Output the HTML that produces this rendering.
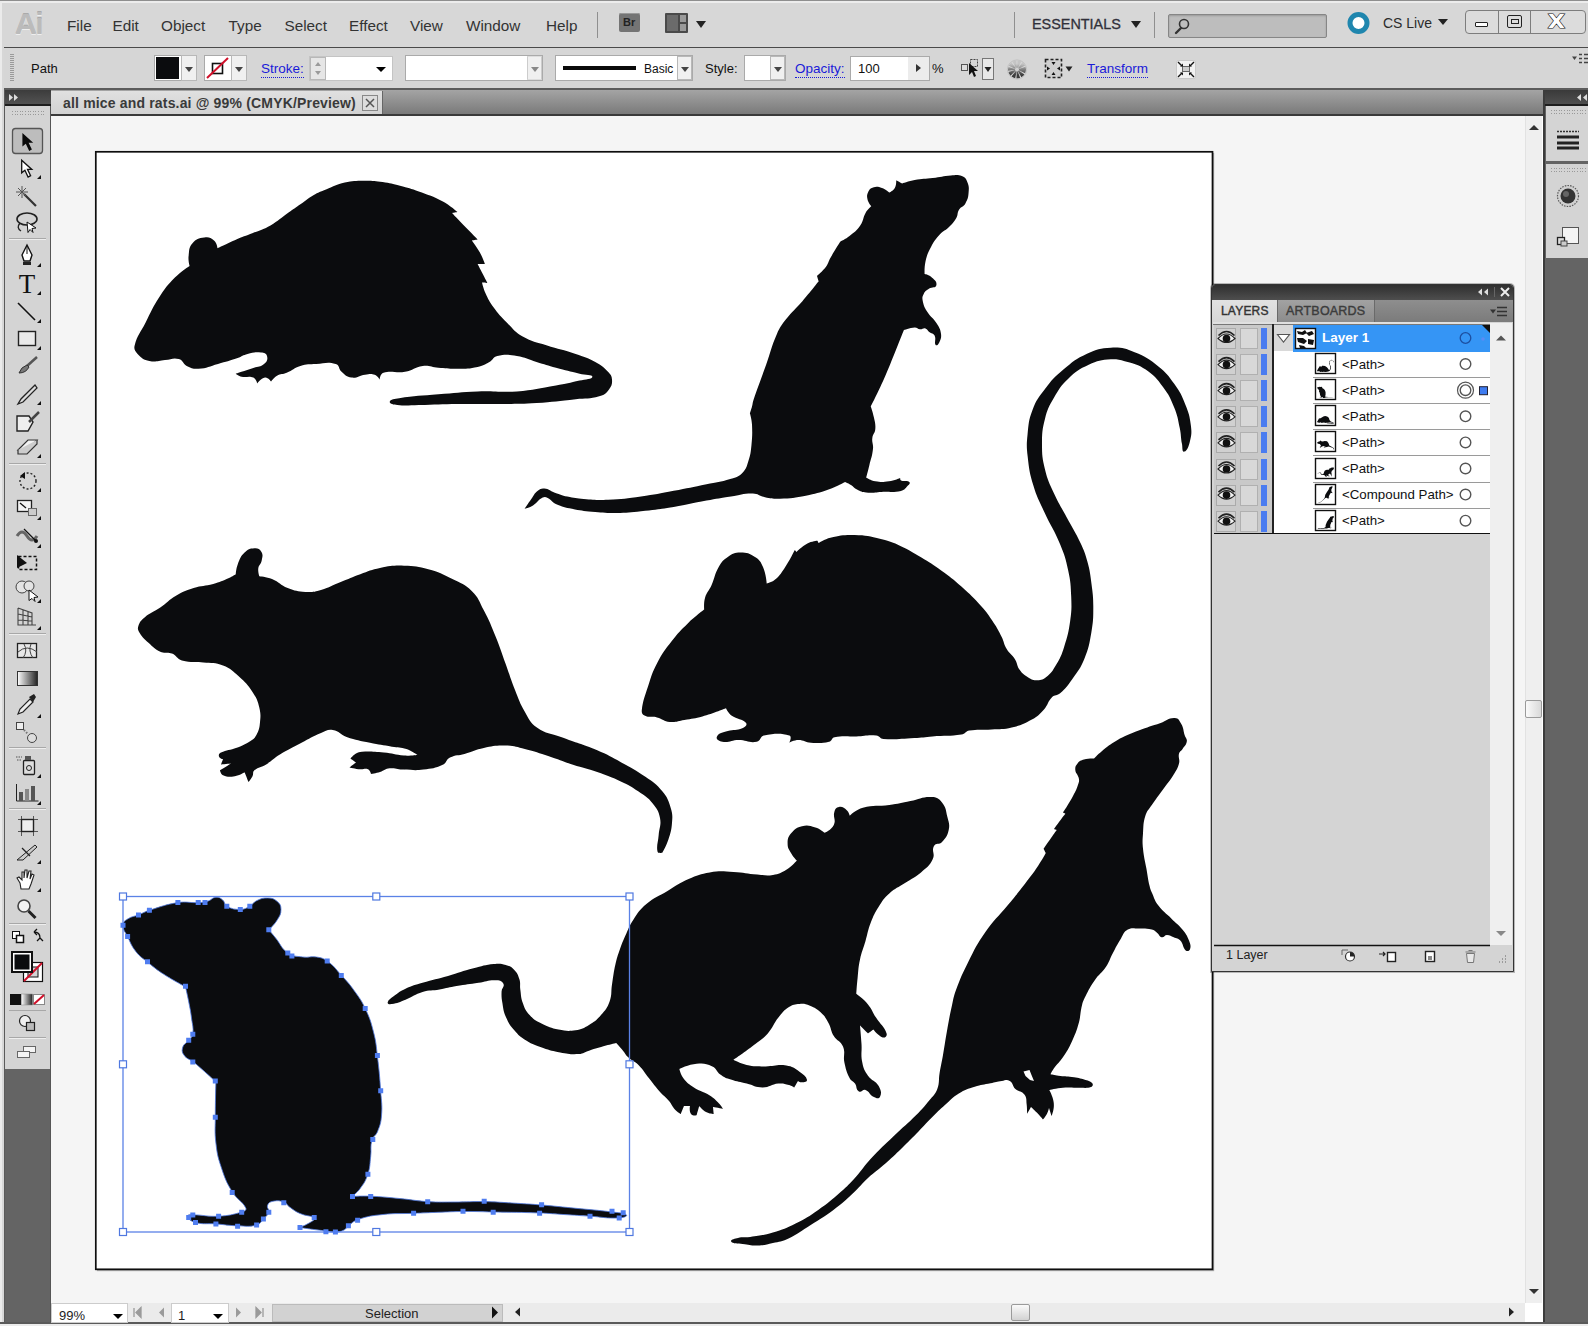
<!DOCTYPE html>
<html lang="en"><head><meta charset="utf-8"><title>all mice and rats.ai @ 99% (CMYK/Preview)</title>
<style>
html,body{margin:0;padding:0}
body{width:1588px;height:1326px;overflow:hidden;position:relative;background:#d7d7d7;font-family:"Liberation Sans",sans-serif;color:#1c1c1c}
.a{position:absolute}
.t{position:absolute;white-space:nowrap;line-height:1}
.menu .t{font-size:15.3px;top:18px;color:#333}
.ctl .t{font-size:13px;top:62px;color:#111}
.lnk{color:#1a1ad8 !important;border-bottom:1px dotted #1a1ad8;padding-bottom:1px;font-size:13.5px !important}
.wbox{background:#fff;border:1px solid #aaa;box-sizing:border-box}
.dd{background:#f0f0f0;border:1px solid #b8b8b8;box-sizing:border-box}
.arr{width:0;height:0;border-left:4px solid transparent;border-right:4px solid transparent;border-top:5px solid #444}
svg{position:absolute;left:0;top:0;overflow:visible}
</style></head><body>
<!-- window frame -->
<div class="a" style="left:0;top:0;width:1588px;height:1px;background:#8e8e8e"></div>
<div class="a" style="left:1px;top:1px;width:1587px;height:2px;background:#ececec"></div>
<div class="a" style="left:0;top:1px;width:2px;height:1325px;background:#ebebeb"></div>
<!-- MENU BAR -->
<div class="menu">
<div class="t" style="left:15px;top:9px;font-size:30px;font-weight:bold;color:#bbb;letter-spacing:-1.5px;text-shadow:0 1px 0 #eee,0 -1px 0 #aaa">Ai</div>
<div class="t" style="left:67px">File</div>
<div class="t" style="left:112.5px">Edit</div>
<div class="t" style="left:161px">Object</div>
<div class="t" style="left:228.5px">Type</div>
<div class="t" style="left:284.5px">Select</div>
<div class="t" style="left:349px">Effect</div>
<div class="t" style="left:410px">View</div>
<div class="t" style="left:466px">Window</div>
<div class="t" style="left:546px">Help</div>
<div class="a" style="left:597px;top:12px;width:1px;height:26px;background:#8f8f8f"></div>
<div class="a" style="left:619px;top:13px;width:21px;height:19px;background:#747474;border-radius:2px;box-shadow:inset 0 1px 0 #999"></div>
<div class="t" style="left:623px;top:17px;font-size:11px;font-weight:bold;color:#222">Br</div>
<div class="a" style="left:665px;top:13px;width:23px;height:20px;background:#4a4a4a;border-radius:1px"></div>
<div class="a" style="left:667px;top:15px;width:11px;height:16px;background:#6b6b6b"></div>
<div class="a" style="left:680px;top:15px;width:6px;height:7px;background:#9a9a9a"></div>
<div class="a" style="left:680px;top:24px;width:6px;height:7px;background:#9a9a9a"></div>
<div class="a arr" style="left:696px;top:21px;border-left-width:5px;border-right-width:5px;border-top-width:7px;border-top-color:#222"></div>
<div class="a" style="left:1014px;top:12px;width:1px;height:26px;background:#8f8f8f"></div>
<div class="t" style="left:1032px;top:17px;font-size:14.4px;color:#30303a;-webkit-text-stroke:0.3px #30303a">ESSENTIALS</div>
<div class="a arr" style="left:1131px;top:21px;border-left-width:5px;border-right-width:5px;border-top-width:7px;border-top-color:#222"></div>
<div class="a" style="left:1154px;top:12px;width:1px;height:26px;background:#8f8f8f"></div>
<div class="a" style="left:1168px;top:14px;width:159px;height:24px;background:#bdbdbd;border:1px solid #868686;box-sizing:border-box;border-radius:2px;box-shadow:inset 0 1px 2px #9a9a9a"></div>
<svg width="1588" height="50" style="pointer-events:none"><circle cx="1184" cy="24" r="4.5" fill="none" stroke="#333" stroke-width="1.6"/><path d="M1181 28L1176 33" stroke="#333" stroke-width="2.4" stroke-linecap="round"/>
<circle cx="1358.5" cy="23" r="8.5" fill="#fff" stroke="#1f86ae" stroke-width="5"/></svg>
<div class="t" style="left:1383px;top:16px;font-size:14px;color:#2b2b2b">CS Live</div>
<div class="a arr" style="left:1438px;top:19px;border-left-width:5px;border-right-width:5px;border-top-width:6px;border-top-color:#222"></div>
<div class="a" style="left:1465px;top:10px;width:121px;height:24px;border:1px solid #7d7d7d;box-sizing:border-box;border-radius:4px;background:#dcdcdc"></div>
<div class="a" style="left:1498px;top:11px;width:1px;height:22px;background:#7d7d7d"></div>
<div class="a" style="left:1530px;top:11px;width:1px;height:22px;background:#7d7d7d"></div>
<div class="a" style="left:1475px;top:22px;width:13px;height:5px;border:1.5px solid #222;box-sizing:border-box;background:#fff;border-radius:1px"></div>
<div class="a" style="left:1507px;top:15px;width:15px;height:13px;border:1.5px solid #222;box-sizing:border-box;border-radius:2px"></div>
<div class="a" style="left:1511px;top:19px;width:8px;height:5px;border:1.5px solid #222;box-sizing:border-box"></div>
<div class="t" style="left:1549px;top:12px;font-size:19px;font-weight:bold;color:#fff;-webkit-text-stroke:1.2px #222;paint-order:stroke fill;font-family:'DejaVu Sans','Liberation Sans',sans-serif;transform:scaleX(1.15)">X</div>
</div>
<!-- CONTROL BAR -->
<div class="a" style="left:4px;top:47px;width:1584px;height:1px;background:#4a4a4a"></div><div class="a" style="left:4px;top:47px;width:1px;height:43px;background:#4a4a4a"></div>
<div class="a" style="left:4px;top:48px;width:1584px;height:40px;background:#d6d6d6"></div>
<div class="a" style="left:4px;top:88px;width:1584px;height:2px;background:#5c5c5c"></div>
<div class="ctl">
<div class="a" style="left:10px;top:54px;width:4px;height:28px;background:repeating-linear-gradient(#9a9a9a 0 1px,transparent 1px 2px)"></div>
<div class="t" style="left:31px">Path</div>
<div class="a wbox" style="left:154px;top:55px;width:28px;height:26px"></div>
<div class="a" style="left:156px;top:57px;width:23px;height:22px;background:#0b0c0e"></div>
<div class="a dd" style="left:181px;top:55px;width:16px;height:26px"></div><div class="a arr" style="left:185px;top:67px"></div>
<div class="a wbox" style="left:204px;top:55px;width:28px;height:26px"></div>
<svg width="400" height="90"><rect x="212.5" y="63.5" width="10" height="10" fill="#fff" stroke="#111" stroke-width="1.6"/><path d="M207 78L228 58" stroke="#d0102a" stroke-width="2"/></svg>
<div class="a dd" style="left:231px;top:55px;width:16px;height:26px"></div><div class="a arr" style="left:235px;top:67px"></div>
<div class="t lnk" style="left:261px">Stroke:</div>
<div class="a wbox" style="left:309px;top:56px;width:84px;height:25px;border-color:#c4c4c4"></div>
<div class="a dd" style="left:310px;top:57px;width:16px;height:23px;background:#e6e6e6"></div>
<div class="a arr" style="left:315px;top:62px;border-top:0;border-bottom:4px solid #9a9a9a;border-left-width:3px;border-right-width:3px"></div>
<div class="a arr" style="left:315px;top:71px;border-top:4px solid #9a9a9a;border-left-width:3px;border-right-width:3px"></div>
<div class="a arr" style="left:376px;top:67px;border-top-color:#000;border-left-width:5px;border-right-width:5px"></div>
<div class="a wbox" style="left:405px;top:55px;width:138px;height:26px"></div>
<div class="a dd" style="left:527px;top:56px;width:15px;height:24px;border-color:#ddd #ccc"></div><div class="a arr" style="left:531px;top:67px;border-top-color:#888"></div>
<div class="a wbox" style="left:555px;top:55px;width:138px;height:26px"></div>
<div class="a" style="left:563px;top:66px;width:73px;height:4px;background:#0a0a0a"></div>
<div class="t" style="left:644px;font-size:12px;top:63px">Basic</div>
<div class="a dd" style="left:677px;top:56px;width:15px;height:24px"></div><div class="a arr" style="left:681px;top:67px"></div>
<div class="t" style="left:705px">Style:</div>
<div class="a wbox" style="left:744px;top:55px;width:42px;height:26px"></div>
<div class="a dd" style="left:770px;top:56px;width:15px;height:24px"></div><div class="a arr" style="left:774px;top:67px"></div>
<div class="t lnk" style="left:795px">Opacity:</div>
<div class="a wbox" style="left:850px;top:56px;width:80px;height:25px"></div>
<div class="t" style="left:858px">100</div>
<div class="a" style="left:908px;top:57px;width:21px;height:23px;background:#ececec"></div>
<div class="a" style="left:916px;top:64px;width:0;height:0;border-top:4.5px solid transparent;border-bottom:4.5px solid transparent;border-left:5px solid #333"></div>
<div class="t" style="left:932px">%</div>
<svg width="1588" height="90">
<rect x="961.5" y="64.5" width="6" height="6" fill="#ddd" stroke="#555"/><rect x="970.5" y="59.5" width="7" height="7" fill="none" stroke="#444" stroke-dasharray="2 1"/><path d="M969 63l9 8-4 0 2 5-2 1-2-5-3 3z" fill="#111"/>
<rect x="982.5" y="58.5" width="11" height="21" fill="#e8e8e8" stroke="#777"/><path d="M984.5 67h7l-3.5 5z" fill="#222"/>
<linearGradient id="rw" x1="0" y1="0" x2="0" y2="1"><stop offset="0" stop-color="#c4c4c4"/><stop offset="1" stop-color="#3c3c3c"/></linearGradient><circle cx="1017" cy="69.5" r="5.5" fill="#d0d0d0" stroke="url(#rw)" stroke-width="7" stroke-dasharray="2.4 .800"/><circle cx="1017" cy="69.5" r="9.6" fill="none" stroke="#c2c2c2" stroke-width="1"/>
<rect x="1045.5" y="59.5" width="16" height="18" fill="#cfcfcf" stroke="#222" stroke-width="1.6" stroke-dasharray="3 2"/><path d="M1051.5 62h4l-2 3zM1051.5 75h4l-2-3zM1047 66.500v4l3-2zM1060 66.500v4l-3-2z" fill="#111"/>
<path d="M1065.5 66.500h7l-3.5 5z" fill="#222"/>
<rect x="1176.5" y="60.5" width="19" height="18" rx="2" fill="#f2f2f2" stroke="#c8c8c8"/><rect x="1182.5" y="66.5" width="7" height="5" fill="#ccc" stroke="#666"/>
<path d="M1178 62l4 4M1194 62l-4 4M1178 77l4-4M1194 77l-4-4" stroke="#111" stroke-width="1.4"/><path d="M1180 66.500h3v-3zM1192 66.500h-3v-3zM1180 72.500h3v3zM1192 72.500h-3v3z" fill="#111"/>
<path d="M1572 56.500l5 0-2.5 3.500z" fill="#444"/><path d="M1579 54.500h3M1584 54.500h6M1579 58.500h3M1584 58.500h6M1579 62.500h3M1584 62.500h6" stroke="#444" stroke-width="1.6"/>
</svg>
<div class="t lnk" style="left:1087px">Transform</div>
</div>
<!-- TAB BAR -->
<div class="a" style="left:51px;top:90px;width:1494px;height:24px;background:linear-gradient(#a4a4a4,#7a7a7a)"></div>
<div class="a" style="left:51px;top:114px;width:1494px;height:2px;background:#3a3a3a"></div>
<div class="a" style="left:51px;top:91px;width:332px;height:23px;background:linear-gradient(#e0e0e0,#d2d2d2);border-right:1px solid #666;box-sizing:border-box"></div>
<div class="t" style="left:63px;top:96px;font-size:14px;color:#3a3a3a;font-weight:bold;letter-spacing:0.17px">all mice and rats.ai @ 99% (CMYK/Preview)</div>
<div class="a" style="left:362px;top:95px;width:16px;height:16px;border:1px solid #888;box-sizing:border-box;background:#ddd"></div>
<svg width="400" height="120"><path d="M366 99l8 8M374 99l-8 8" stroke="#555" stroke-width="1.5"/></svg>
<!-- LEFT TOOLBAR -->
<div class="a" style="left:4px;top:90px;width:1px;height:1232px;background:#5a5a5a"></div>
<div class="a" style="left:5px;top:90px;width:46px;height:16px;background:linear-gradient(#3c3c3c,#555)"></div>
<div class="a" style="left:5px;top:106px;width:46px;height:963px;background:#d4d4d4"></div>
<div class="a" style="left:5px;top:1069px;width:46px;height:253px;background:#646464"></div>
<div class="a" style="left:50px;top:106px;width:1px;height:1216px;background:#555"></div>
<div class="a" style="left:12px;top:111px;width:33px;height:1px;background:repeating-linear-gradient(90deg,#999 0 1px,transparent 1px 2.6px)"></div><div class="a" style="left:12px;top:114px;width:33px;height:1px;background:repeating-linear-gradient(90deg,#999 0 1px,transparent 1px 2.6px)"></div><div class="a" style="left:5px;top:104px;width:46px;height:2px;background:#1e1e1e"></div>
<svg width="60" height="1100" viewBox="0 0 60 1100">
<rect x="12.5" y="128.5" width="30" height="25" rx="3" fill="#bdbdbd" stroke="#555" stroke-width="1.3"/>
<path d="M22.4 133v13.500l3.4-2.8 3.4 7.3 2.7-1.4-3.3-6.800h4.600z" fill="#0a0a0a"/>
<path d="M21.7 160.300v12.500l3.2-2.6 3.2 6.8 2.5-1.3-3.1-6.300h4.300z" fill="#fff" stroke="#111" stroke-width="1.3"/><path d="M41 179v-4l-4 4z" fill="#111"/>
<path d="M24 194l12 12" stroke="#333" stroke-width="2.2"/><path d="M22 186v12M16 192h12M18 188l8 8M26 188l-8 8" stroke="#555" stroke-width="1"/>
<ellipse cx="27" cy="219" rx="10" ry="6" fill="none" stroke="#222" stroke-width="1.6"/><path d="M20 223q-4 5 1 8" fill="none" stroke="#222" stroke-width="1.4"/><path d="M27 222l9 6-4 .5 1 4-3-3-2 3z" fill="#fff" stroke="#111"/>
<path d="M9 238.500h37" stroke="#a8a8a8"/><path d="M9 239.500h37" stroke="#eee"/>
<path d="M27 245l5 10-2 6h-6l-2-6z" fill="#fff" stroke="#111" stroke-width="1.4"/><path d="M27 246v8" stroke="#111"/><rect x="23" y="262" width="8" height="3" fill="#222"/><path d="M41 267v-4l-4 4z" fill="#111"/>
<text x="27" y="293" font-family="Liberation Serif,serif" font-size="27" text-anchor="middle" fill="#111">T</text><path d="M41 295v-4l-4 4z" fill="#111"/>
<path d="M18 303l17 17" stroke="#111" stroke-width="1.6"/><path d="M41 323v-4l-4 4z" fill="#111"/>
<rect x="18.5" y="331.5" width="17" height="14" fill="#eaeaea" stroke="#222" stroke-width="1.4"/><path d="M41 350v-4l-4 4z" fill="#111"/>
<path d="M37 357l-10 9" stroke="#555" stroke-width="2.5"/><path d="M27 365q-6 2-8 8 7 0 10-6z" fill="#777" stroke="#333"/>
<path d="M35 385l-14 14-3 5 5-2 14-14z" fill="#ddd" stroke="#222" stroke-width="1.3"/><path d="M41 405v-4l-4 4z" fill="#111"/>
<path d="M17 416h12l4 6-5 9h-11z" fill="#eee" stroke="#222" stroke-width="1.4"/><path d="M39 412l-10 10" stroke="#444" stroke-width="2.5"/>
<path d="M18 450l10-10h9l-10 10z" fill="#f2f2f2" stroke="#333" stroke-width="1.2"/><path d="M18 450v4h9l10-10v-4" fill="#ccc" stroke="#333" stroke-width="1.2"/><path d="M41 458v-4l-4 4z" fill="#111"/>
<path d="M9 463.500h37" stroke="#a8a8a8"/><path d="M9 464.500h37" stroke="#eee"/>
<circle cx="28" cy="481" r="8" fill="none" stroke="#222" stroke-width="1.4" stroke-dasharray="2 2"/><path d="M20 476l5-4v7z" fill="#111"/><path d="M41 492v-4l-4 4z" fill="#111"/>
<rect x="17.5" y="500.5" width="14" height="11" fill="#f4f4f4" stroke="#222" stroke-width="1.3"/><rect x="28.5" y="508.5" width="8" height="7" fill="#ccc" stroke="#666"/><path d="M20 503l6 5" stroke="#111" stroke-width="1.3"/><path d="M41 520v-4l-4 4z" fill="#111"/>
<path d="M17 536q5-8 10 0t10 0" fill="none" stroke="#666" stroke-width="3"/><path d="M24 529l12 12" stroke="#111" stroke-width="1.2"/><circle cx="36" cy="541" r="2" fill="#111"/><path d="M41 548v-4l-4 4z" fill="#111"/>
<rect x="18.5" y="556.5" width="18" height="13" fill="none" stroke="#111" stroke-width="1.5" stroke-dasharray="3 2"/><path d="M17 555l10 8-10 5z" fill="#111"/>
<circle cx="22" cy="587" r="6" fill="#e4e4e4" stroke="#444"/><circle cx="29" cy="586" r="5" fill="#e4e4e4" stroke="#444"/><path d="M29 590l9 7-4 .5 1 4-3-3-3 2z" fill="#fff" stroke="#111"/><path d="M41 603v-4l-4 4z" fill="#111"/>
<path d="M18 608v17h18M18 608l14 5v12M23 610v15M28 612v13M18 614l14 3M18 620l14 1" fill="none" stroke="#444" stroke-width="1.1"/><path d="M41 630v-4l-4 4z" fill="#111"/>
<path d="M9 633.500h37" stroke="#a8a8a8"/><path d="M9 634.500h37" stroke="#eee"/>
<rect x="17.5" y="643.5" width="19" height="14" fill="#e8e8e8" stroke="#222" stroke-width="1.3"/><path d="M18 652q9-8 19 0M24 644q4 7-1 14M31 644q-3 7 2 14" fill="none" stroke="#444"/>
<linearGradient id="gg" x1="0" x2="1"><stop offset="0" stop-color="#fff"/><stop offset="1" stop-color="#222"/></linearGradient><rect x="17.5" y="671.5" width="20" height="14" fill="url(#gg)" stroke="#333"/>
<path d="M18 714l2-5 10-10 3 3-10 10z" fill="#eee" stroke="#222" stroke-width="1.2"/><path d="M29 697l5-3 2 3-3 5z" fill="#222"/><path d="M41 718v-4l-4 4z" fill="#111"/>
<rect x="16.5" y="722.5" width="7" height="7" fill="#eee" stroke="#444"/><circle cx="32" cy="738" r="4.5" fill="#ddd" stroke="#444"/><path d="M24 730l4 4" stroke="#777" stroke-dasharray="1.5 1.5" stroke-width="2"/>
<path d="M9 747.500h37" stroke="#a8a8a8"/><path d="M9 748.500h37" stroke="#eee"/>
<rect x="23.5" y="760.5" width="11" height="14" rx="1" fill="#ddd" stroke="#222" stroke-width="1.3"/><circle cx="29" cy="768" r="2.5" fill="none" stroke="#222"/><rect x="25" y="756" width="6" height="4" fill="#555"/><path d="M16 757h6M17 760h4" stroke="#555" stroke-dasharray="1.5 1"/><path d="M41 778v-4l-4 4z" fill="#111"/>
<path d="M16.5 784v17h22" fill="none" stroke="#222"/><rect x="19" y="792" width="4" height="9" fill="#555"/><rect x="25" y="789" width="4" height="12" fill="#888"/><rect x="31" y="786" width="4" height="15" fill="#555"/><path d="M41 805v-4l-4 4z" fill="#111"/>
<path d="M9 808.500h37" stroke="#a8a8a8"/><path d="M9 809.500h37" stroke="#eee"/>
<rect x="21.5" y="819.5" width="12" height="12" fill="#eee" stroke="#222" stroke-width="1.4"/><path d="M18 819.500h3M34 819.500h4M18 831.500h3M34 831.500h4M21.5 816v3M21.5 832v4M33.5 816v3M33.5 832v4" stroke="#555"/>
<path d="M17 860l18-15 2 2-14 13z" fill="#ccc" stroke="#222"/><path d="M22 848l8 8" stroke="#222" stroke-width="1.3"/><path d="M41 864v-4l-4 4z" fill="#111"/>
<path d="M20 883l-3-5 2-1 3 3v-8h2v6l1-8h2l0 8 2-7h2l-1 8 2-5 2 1-3 9-2 5h-8z" fill="#fff" stroke="#222" stroke-width="1.1"/><path d="M41 892v-4l-4 4z" fill="#111"/>
<circle cx="24" cy="906" r="6" fill="#f2f2f2" stroke="#444" stroke-width="1.6"/><path d="M28.5 911l7 7" stroke="#222" stroke-width="3"/>
<path d="M9 923.500h37" stroke="#a8a8a8"/><path d="M9 924.500h37" stroke="#eee"/>
<rect x="12.5" y="931.5" width="7" height="7" fill="#fff" stroke="#111"/><rect x="16.5" y="935.5" width="7" height="7" fill="#fff" stroke="#111" stroke-width="1.5"/><path d="M34 932q6 0 6 6M34 932l3-3M34 932l3 3M40 938l-3 3M40 938l3 3" stroke="#111" stroke-width="1.3" fill="none"/>
<rect x="23.5" y="962.5" width="19" height="19" fill="#fff" stroke="#111" stroke-width="1.2"/><rect x="28" y="967" width="10" height="10" fill="#d4d4d4" stroke="#111"/><path d="M24 981l18-18" stroke="#d0102a" stroke-width="2"/>
<rect x="12" y="952" width="20" height="20" fill="#fff" stroke="#111" stroke-width="2"/><rect x="14.5" y="954.5" width="15" height="15" fill="#0b0c0e"/>
<rect x="10" y="994" width="11" height="11" fill="#111"/><rect x="21.5" y="994" width="11" height="11" fill="url(#gg)" stroke="#888" stroke-width=".5"/><rect x="33.5" y="994.5" width="11" height="10" fill="#fff" stroke="#888"/><path d="M34 1004l10-9" stroke="#d0102a" stroke-width="2"/>
<path d="M9 1010.500h37" stroke="#a8a8a8"/>
<circle cx="25" cy="1021" r="5.5" fill="#f0f0f0" stroke="#222" stroke-width="1.2"/><rect x="26.5" y="1022.5" width="8" height="8" fill="#bbb" stroke="#222" stroke-width="1.2"/>
<path d="M9 1037.500h37" stroke="#a8a8a8"/><path d="M9 1038.500h37" stroke="#eee"/>
<rect x="23.5" y="1046.5" width="12" height="6" fill="#f4f4f4" stroke="#666"/><rect x="17.5" y="1051.5" width="12" height="6" fill="#f4f4f4" stroke="#666"/>
</svg>
<!-- CANVAS -->
<div class="a" style="left:51px;top:116px;width:1474px;height:1187px;background:#f5f5f5"></div>
<div class="a" style="left:96px;top:152px;width:1117px;height:1118px;background:#fff;box-shadow:1px 1px 1px rgba(0,0,0,.3)"></div>
<svg width="1588" height="1326" viewBox="0 0 1588 1326">
<rect x="95.8" y="151.8" width="1116.7" height="1117.5" fill="none" stroke="#0e0e0e" stroke-width="1.7"/>
<path d="M134.7 345.3C137.3 334.9 140.4 332.7 145.5 322.7C151.4 311.1 152.1 308.2 159.2 297.3C165.4 287.8 167.0 285.7 174.9 277.6C180.8 271.5 189.6 265.9 189.6 265.9C189.6 265.9 188.0 260.4 188.6 256.0C189.4 250.1 188.6 247.9 192.5 243.3C196.3 238.8 198.4 238.3 204.3 237.5C208.8 236.9 210.5 237.5 214.0 240.4C217.0 242.8 217.5 248.2 217.5 248.2C217.5 248.2 227.2 243.4 235.3 239.9C243.1 236.5 245.0 236.2 252.9 233.0C260.9 229.7 263.0 229.7 270.5 225.4C279.0 220.5 280.2 218.4 288.2 212.8C293.8 208.8 295.1 208.0 300.8 204.0C306.5 200.0 307.4 198.6 313.4 195.2C318.8 192.1 320.2 191.8 326.0 189.5C334.4 186.1 336.0 184.6 344.8 182.6C353.1 180.7 355.2 180.8 363.7 180.7C372.2 180.6 374.2 180.8 382.6 182.0C390.5 183.1 392.3 183.7 400.0 185.7C408.6 187.9 410.5 188.4 418.8 191.4C429.6 195.3 432.2 195.8 442.4 201.2C449.8 205.1 457.5 212.0 457.5 212.0C457.5 212.0 452.0 213.0 452.0 213.0C452.0 213.0 459.6 221.1 465.9 227.6C471.1 233.0 477.6 239.4 477.6 239.4C477.6 239.4 471.8 240.4 471.8 240.4C471.8 240.4 476.5 246.5 479.6 252.0C482.5 257.1 484.9 263.9 484.9 263.9C484.9 263.9 477.6 263.9 477.6 263.9C477.6 263.9 487.5 283.0 487.5 283.0C487.5 283.0 482.0 282.5 482.0 282.5C482.0 282.5 483.4 288.7 485.5 293.3C488.5 299.7 489.1 301.3 493.3 307.0C498.8 314.6 500.4 316.1 507.0 322.7C513.6 329.4 514.5 331.8 522.7 336.5C532.5 342.2 535.5 341.7 546.3 345.3C559.4 349.6 562.6 349.5 575.7 354.0C584.7 357.1 587.0 357.4 595.3 362.0C601.6 365.5 603.0 366.6 608.0 371.8C610.7 374.7 611.8 375.7 612.0 379.6C612.3 384.2 611.8 385.7 609.0 389.4C605.7 393.7 604.4 394.8 599.2 396.3C589.0 399.3 586.3 398.1 575.7 399.2C558.1 401.1 554.2 401.9 536.5 403.0C518.9 404.1 514.9 403.8 497.3 404.0C479.6 404.2 475.7 403.8 458.0 404.0C440.4 404.2 436.4 404.7 418.8 405.0C409.1 405.2 406.9 406.1 397.3 405.0C393.6 404.6 389.2 403.9 389.8 401.6C390.4 399.3 394.8 398.9 399.2 398.2C415.4 395.8 420.7 395.8 438.4 394.3C456.0 392.8 459.9 392.1 477.6 391.4C495.3 390.7 499.3 392.7 516.9 391.4C534.6 390.1 538.5 388.5 556.0 385.5C566.7 383.7 569.1 383.1 579.6 380.6C585.5 379.2 592.4 379.0 592.4 376.7C592.4 374.4 585.3 375.1 579.6 373.7C569.0 371.1 566.6 370.7 556.0 367.8C547.2 365.4 545.3 364.6 536.5 362.0C527.7 359.3 526.0 357.4 516.9 356.0C508.2 354.7 505.9 354.1 497.3 356.0C492.9 357.0 493.3 359.8 489.4 362.0C484.4 364.8 483.2 365.7 477.6 366.9C468.9 368.8 466.9 368.6 458.0 368.8C449.2 369.0 447.2 368.5 438.4 367.8C431.3 367.2 429.8 365.1 422.7 365.9C414.4 366.9 413.3 370.4 405.0 371.8C395.5 373.5 392.0 370.1 383.5 372.7C380.1 373.7 379.6 379.6 379.6 379.6C379.6 379.6 377.7 375.7 374.7 374.7C370.6 373.3 369.3 374.2 365.0 374.7C358.8 375.5 357.6 378.4 351.4 377.6C346.3 377.0 345.5 375.2 341.6 371.8C338.3 368.9 339.9 365.3 335.7 364.0C327.2 361.4 324.9 363.5 316.0 364.0C308.9 364.4 307.2 363.9 300.4 365.9C293.8 367.9 293.0 370.0 286.7 372.7C282.5 374.5 281.0 373.4 277.0 375.7C273.7 377.6 271.0 381.6 271.0 381.6C271.0 381.6 268.2 377.2 265.0 377.6C260.7 378.2 257.3 383.5 257.3 383.5C257.3 383.5 256.2 378.9 253.3 377.6C248.5 375.5 246.8 377.8 241.6 376.7C238.7 376.1 235.7 373.7 235.7 373.7C235.7 373.7 245.4 370.7 253.3 368.0C258.2 366.3 260.1 367.4 264.0 364.0C266.9 361.5 268.0 359.7 267.0 356.0C266.2 353.0 264.1 352.8 261.0 352.5C254.9 351.9 253.5 352.6 247.5 354.0C242.8 355.1 242.2 356.5 237.6 358.0C228.9 360.9 226.9 361.5 218.0 363.9C209.2 366.3 207.5 368.2 198.4 368.8C193.0 369.1 191.6 368.3 186.7 365.9C182.5 363.8 183.4 360.2 178.8 359.0C172.8 357.4 171.2 359.6 165.0 360.0C158.0 360.5 156.3 362.5 149.4 361.0C143.4 359.7 141.8 358.5 137.6 354.0C134.8 351.0 133.7 349.3 134.7 345.3Z" fill="#0b0c0e"/>
<path d="M753.5 400.0C758.2 386.0 760.5 380.5 766.2 364.6C771.1 350.8 771.1 347.3 777.0 333.8C780.1 326.8 781.3 325.4 786.0 319.3C792.8 310.6 795.2 309.5 802.4 301.2C810.0 292.4 818.7 281.3 818.7 281.3C818.7 281.3 817.0 275.9 817.0 275.9C817.0 275.9 822.6 271.4 826.0 266.8C828.7 263.2 828.3 261.7 830.5 257.8C834.7 250.3 840.4 241.5 840.4 241.5C840.4 241.5 845.8 239.0 849.5 236.0C854.9 231.6 856.5 230.9 860.4 225.2C863.9 220.1 862.7 217.9 865.8 212.5C867.6 209.3 871.2 206.2 871.2 206.2C871.2 206.2 868.4 203.0 867.6 199.8C866.9 196.6 866.7 195.6 868.0 192.6C869.3 189.7 869.9 188.5 873.0 187.5C876.9 186.2 878.1 186.8 882.0 188.0C885.7 189.2 889.3 192.6 889.3 192.6C889.3 192.6 893.2 190.8 894.8 188.0C896.5 184.9 896.2 180.3 896.2 180.3C896.2 180.3 902.0 183.5 902.0 183.5C902.0 183.5 908.9 181.0 914.7 180.0C922.8 178.6 924.7 179.0 932.8 178.0C941.0 177.0 942.7 176.0 950.9 175.4C955.8 175.1 957.2 174.2 961.8 176.0C965.1 177.3 965.9 178.4 967.2 181.7C969.1 186.3 969.0 187.7 968.6 192.6C968.2 197.7 967.9 199.0 965.4 203.5C963.4 207.0 961.1 206.4 959.0 209.8C956.9 213.1 958.3 214.6 956.3 218.0C953.7 222.5 952.7 223.3 949.0 227.0C945.3 230.7 943.5 230.4 940.0 234.2C935.3 239.4 934.3 240.7 931.0 246.9C927.7 253.1 927.1 254.6 925.5 261.4C924.2 266.9 924.6 274.0 924.6 274.0C924.6 274.0 928.7 274.7 931.0 276.8C934.2 279.8 937.0 281.1 936.4 285.0C935.9 288.6 932.2 286.5 929.2 288.6C926.4 290.6 925.3 290.9 923.7 294.0C922.2 296.9 922.1 298.0 922.8 301.2C923.9 306.4 924.6 307.5 927.4 312.0C930.8 317.4 933.0 317.6 936.4 323.0C939.2 327.5 940.3 328.6 941.0 333.8C941.5 338.0 940.8 339.3 939.0 342.9C938.2 344.5 936.4 346.2 935.5 344.7C934.0 342.3 936.4 339.3 934.6 335.6C933.3 333.0 931.5 333.8 929.2 332.0C927.4 330.6 927.7 329.1 925.5 328.4C923.1 327.7 922.5 329.5 920.0 329.3C917.5 329.1 917.2 327.4 914.7 327.5C909.7 327.8 903.8 330.2 903.8 330.2C903.8 330.2 899.9 340.2 896.6 348.3C890.8 362.6 889.8 365.9 883.5 380.0C878.1 392.1 870.8 406.5 870.8 406.5C870.8 406.5 872.8 412.2 873.8 417.0C874.9 422.3 875.7 423.6 875.3 429.0C875.0 433.3 872.8 433.9 872.3 438.2C871.7 442.9 873.5 444.0 873.0 448.8C872.2 456.4 871.1 458.0 869.3 465.4C868.0 470.9 866.2 477.5 866.2 477.5C866.2 477.5 870.9 480.6 875.3 481.3C881.4 482.3 882.9 482.1 889.0 481.3C894.2 480.6 900.2 478.0 900.2 478.0C900.2 478.0 899.9 480.0 901.0 480.5C904.0 481.8 907.3 480.0 909.3 482.0C910.9 483.6 908.6 484.9 907.0 486.6C904.7 489.1 904.3 490.3 901.0 491.0C892.5 492.8 890.2 491.5 881.4 491.9C874.6 492.2 873.0 493.2 866.2 492.6C861.9 492.2 860.9 491.5 857.0 489.6C854.0 488.1 853.9 486.8 851.0 485.0C848.4 483.4 845.0 482.0 845.0 482.0C845.0 482.0 836.2 486.9 828.5 489.6C818.5 493.1 816.2 493.7 805.8 495.7C794.3 497.9 791.7 498.3 780.0 498.7C773.2 498.9 771.7 498.5 765.0 497.2C759.4 496.1 758.6 493.5 752.9 493.4C742.9 493.2 740.8 495.0 731.0 496.5C720.0 498.2 717.5 498.6 706.5 500.6C691.7 503.3 688.5 504.6 673.7 507.0C659.1 509.4 655.8 509.7 641.0 511.2C630.0 512.3 627.5 512.8 616.4 512.9C605.4 513.0 602.9 512.7 591.9 511.7C582.9 510.9 580.8 510.7 572.0 508.8C564.6 507.2 562.8 507.0 555.8 503.9C551.7 502.1 551.8 500.0 547.7 498.0C545.7 497.0 544.7 496.6 542.7 497.6C537.8 500.1 537.8 502.5 533.0 505.5C529.6 507.6 524.7 508.8 524.7 508.8C524.7 508.8 528.2 503.3 531.3 499.0C534.1 495.2 534.1 493.7 537.8 490.8C540.3 488.9 541.3 488.3 544.4 488.6C549.1 489.1 549.7 490.9 554.2 492.4C560.0 494.4 561.3 495.2 567.3 496.5C574.6 498.1 576.3 498.4 583.7 499.0C594.6 499.9 597.1 500.3 608.0 499.8C622.9 499.1 626.2 498.5 641.0 496.5C655.8 494.5 659.0 493.6 673.7 490.8C688.5 488.0 691.8 487.3 706.5 484.2C717.2 482.0 719.8 482.3 730.2 479.0C736.0 477.2 738.0 477.3 742.3 473.0C746.6 468.7 746.5 466.7 748.4 461.0C750.6 454.4 750.7 452.7 751.4 445.8C752.3 436.3 752.4 434.1 752.0 424.6C751.8 419.4 749.9 413.3 749.9 413.3C749.9 413.3 751.2 409.6 752.0 406.5C752.8 403.6 752.5 402.8 753.5 400.0Z" fill="#0b0c0e"/>
<path d="M138.3 626.2C139.8 621.6 140.9 620.6 144.6 617.4C151.0 612.0 153.4 612.2 160.3 607.5C167.6 602.5 168.4 600.3 176.0 595.8C183.5 591.4 185.3 590.6 193.6 588.0C202.2 585.3 204.5 586.4 213.2 584.0C220.5 581.9 222.0 581.0 229.0 578.0C232.2 576.6 235.8 574.2 235.8 574.2C235.8 574.2 236.0 568.6 237.7 564.4C240.0 558.7 240.2 556.9 244.6 552.6C248.1 549.3 249.6 548.6 254.4 548.3C257.9 548.1 259.5 548.7 261.3 551.7C263.3 555.1 262.4 556.6 261.7 560.5C261.0 564.3 258.9 564.5 258.3 568.3C257.8 571.8 259.3 576.2 259.3 576.2C259.3 576.2 266.6 576.8 272.0 579.0C279.5 582.1 280.1 585.1 287.7 588.0C295.3 590.9 297.3 591.4 305.4 591.9C312.5 592.3 314.2 591.8 321.0 589.9C330.2 587.3 331.8 585.5 340.7 582.0C349.5 578.5 351.4 577.4 360.3 574.2C369.1 571.1 370.9 569.8 380.0 568.0C390.6 565.9 393.2 565.4 404.0 565.7C415.1 566.0 417.6 566.4 428.3 569.3C439.6 572.4 441.9 573.8 452.4 579.0C461.5 583.6 464.5 583.8 471.7 591.0C479.0 598.2 479.0 601.2 483.8 610.3C489.9 621.9 490.8 624.7 495.8 636.9C500.6 648.7 501.2 651.5 505.5 663.4C509.8 675.4 510.3 678.2 515.0 690.0C519.0 699.9 519.4 702.5 524.8 711.7C529.3 719.4 529.6 722.3 536.9 727.4C546.5 734.1 550.1 732.9 561.0 737.0C577.2 743.2 581.2 743.6 597.2 750.3C608.4 755.0 610.7 756.6 621.3 762.4C632.4 768.5 635.1 769.5 645.4 776.8C653.6 782.6 656.0 783.5 662.3 791.3C667.7 797.9 668.3 800.1 670.8 808.2C672.7 814.5 672.5 816.2 672.0 822.7C671.4 830.5 670.8 832.2 668.4 839.6C666.4 845.8 662.3 852.8 662.3 852.8C662.3 852.8 657.9 853.8 657.5 851.6C656.3 845.6 658.1 842.3 658.7 834.7C659.3 827.1 661.4 825.3 660.0 817.9C658.6 810.7 657.3 809.1 652.7 803.4C647.3 796.8 645.2 796.1 638.2 791.3C631.0 786.3 629.2 785.4 621.3 781.7C610.7 776.7 608.2 775.9 597.2 772.0C586.5 768.2 583.8 768.3 573.0 764.8C562.1 761.2 559.8 759.9 548.9 756.3C538.1 752.8 535.8 751.7 524.8 749.0C516.2 746.9 514.3 745.7 505.5 745.5C495.7 745.2 493.4 745.9 483.8 747.9C474.9 749.7 473.2 751.4 464.5 753.9C458.0 755.7 456.0 754.5 450.0 757.5C445.8 759.6 446.9 762.9 442.7 764.8C434.6 768.5 432.3 768.5 423.4 769.6C414.7 770.7 412.7 769.9 404.0 769.6C397.5 769.4 396.1 767.7 389.7 768.3C385.1 768.8 384.5 770.6 380.0 772.0C376.0 773.2 371.0 774.0 371.0 774.0C371.0 774.0 370.3 770.3 368.0 769.3C364.8 767.9 363.7 769.7 360.3 769.3C355.4 768.8 349.5 767.4 349.5 767.4C349.5 767.4 356.0 762.5 356.0 762.5C356.0 762.5 350.5 758.5 350.5 758.5C350.5 758.5 353.1 755.2 356.0 753.5C358.4 752.1 359.2 751.8 362.0 751.7C371.3 751.4 374.0 751.7 383.8 752.6C393.0 753.4 394.8 754.9 404.0 755.6C410.0 756.0 417.4 755.0 417.4 755.0C417.4 755.0 411.8 750.7 406.5 749.0C400.2 746.9 398.5 747.8 392.0 746.7C382.1 745.0 379.8 744.9 370.0 742.8C359.4 740.5 356.9 740.5 346.6 737.0C340.0 734.7 339.7 731.1 332.8 730.0C327.4 729.2 326.1 730.9 321.0 733.0C311.9 736.7 310.2 738.2 301.5 742.8C291.7 748.0 289.3 748.8 279.9 754.6C273.4 758.6 272.7 760.4 266.2 764.4C261.1 767.5 258.9 766.4 254.4 770.3C252.3 772.1 253.8 773.7 252.5 776.2C251.1 779.0 248.5 782.0 248.5 782.0C248.5 782.0 244.6 772.3 244.6 772.3C244.6 772.3 239.5 775.6 234.8 776.2C229.5 776.9 227.9 777.2 223.0 775.2C220.6 774.2 220.0 770.3 220.0 770.3C220.0 770.3 231.0 763.4 231.0 763.4C231.0 763.4 221.0 764.4 221.0 764.4C221.0 764.4 223.0 759.5 223.0 759.5C223.0 759.5 219.6 758.7 219.0 756.6C218.4 754.7 219.2 753.5 221.0 752.6C226.9 749.6 229.9 750.4 236.8 747.7C243.2 745.2 244.7 744.6 250.5 740.9C253.7 738.9 254.6 738.3 256.4 735.0C259.0 730.1 259.3 728.7 259.9 723.2C260.6 716.2 260.9 714.4 259.3 707.5C257.5 700.0 256.7 698.3 252.5 691.9C247.3 684.0 245.7 682.5 238.7 676.2C232.3 670.5 231.0 668.5 223.0 665.4C214.7 662.2 212.3 663.6 203.4 662.5C193.8 661.3 191.2 663.1 181.9 660.5C176.7 659.0 177.0 655.6 172.0 653.6C167.1 651.6 165.1 653.9 160.3 651.7C154.3 648.9 153.4 647.3 148.5 642.8C144.1 638.8 142.8 638.0 139.7 633.0C138.1 630.3 137.4 629.2 138.3 626.2Z" fill="#0b0c0e"/>
<path d="M641.8 710.0C643.0 700.4 644.6 697.0 648.0 686.6C651.5 675.8 651.9 673.1 657.2 663.0C662.6 652.6 664.4 650.6 671.6 641.3C678.3 632.6 680.1 630.9 688.0 623.2C694.8 616.6 704.2 609.6 704.2 609.6C704.2 609.6 703.5 603.0 705.0 597.9C706.8 591.7 708.9 591.1 711.5 585.2C715.1 577.1 714.3 574.6 718.7 567.0C721.7 561.7 722.7 560.4 727.8 557.0C732.8 553.7 734.4 552.6 740.4 552.6C747.3 552.6 749.2 553.3 755.0 557.0C759.9 560.1 760.7 561.7 763.0 567.0C766.1 573.9 766.7 583.4 766.7 583.4C766.7 583.4 771.7 582.3 774.8 579.7C779.7 575.6 780.4 574.2 784.0 568.9C789.5 560.7 794.8 549.9 794.8 549.9C794.8 549.9 796.5 552.0 796.5 552.0C796.5 552.0 801.9 546.4 807.4 543.5C811.5 541.3 817.4 540.8 817.4 540.8C817.4 540.8 818.5 543.0 818.5 543.0C818.5 543.0 824.7 539.0 830.4 537.7C841.1 535.4 843.7 534.8 854.6 535.1C866.5 535.4 869.2 536.3 880.8 539.1C890.1 541.3 892.2 542.2 900.9 546.2C910.3 550.5 912.1 552.0 921.0 557.3C930.3 562.9 932.4 564.1 941.2 570.4C950.6 577.2 952.8 578.7 961.4 586.5C970.9 595.0 973.0 597.0 981.5 606.6C987.5 613.4 988.6 615.2 993.6 622.8C997.7 628.9 998.4 630.4 1001.7 636.9C1004.3 642.2 1003.7 643.9 1006.7 649.0C1009.7 654.0 1011.7 654.1 1014.8 659.0C1017.7 663.7 1016.6 665.7 1019.8 670.1C1022.6 674.0 1023.8 674.6 1027.9 677.2C1031.2 679.2 1032.1 680.2 1035.9 680.2C1040.6 680.2 1042.2 680.0 1046.0 677.2C1051.6 673.0 1052.4 671.2 1056.0 665.1C1060.6 657.4 1061.4 655.5 1064.1 647.0C1067.8 635.5 1068.5 632.8 1070.2 620.8C1071.7 610.0 1071.6 607.5 1071.2 596.6C1070.7 584.7 1070.7 582.0 1068.2 570.4C1065.6 558.3 1064.8 555.6 1060.1 544.2C1054.0 529.3 1051.0 526.7 1044.3 512.0C1038.9 500.1 1037.0 497.7 1033.3 485.2C1029.5 472.7 1029.2 469.7 1027.7 456.7C1026.6 447.0 1026.5 444.7 1027.5 435.0C1028.7 423.6 1028.4 420.7 1032.5 410.0C1036.4 399.7 1038.3 397.7 1045.0 389.0C1052.3 379.4 1054.2 377.3 1063.4 369.6C1073.2 361.4 1075.4 359.2 1087.0 353.8C1097.1 349.2 1099.8 348.1 1110.9 347.7C1121.7 347.3 1124.5 348.2 1134.6 352.2C1146.2 356.8 1148.7 358.6 1158.4 366.4C1166.7 373.0 1168.1 375.2 1174.2 383.8C1180.3 392.4 1181.4 394.6 1185.3 404.4C1188.9 413.3 1189.6 415.5 1190.8 425.0C1191.7 432.1 1191.7 433.9 1190.0 440.9C1188.8 446.2 1187.2 450.6 1184.5 451.6C1181.8 452.6 1182.7 447.5 1182.0 444.0C1180.6 437.0 1181.3 435.2 1179.8 428.2C1177.8 418.8 1177.8 416.5 1174.2 407.6C1170.2 397.8 1169.3 395.4 1163.0 387.0C1156.4 378.2 1154.8 375.9 1145.7 369.6C1138.1 364.3 1135.6 364.3 1126.7 361.7C1119.8 359.7 1118.1 358.7 1110.9 359.3C1100.6 360.1 1098.1 360.5 1088.7 364.8C1078.4 369.5 1076.2 371.2 1068.0 379.0C1060.3 386.4 1059.2 388.8 1053.8 398.0C1048.7 406.8 1047.5 408.9 1045.0 418.7C1042.2 429.8 1042.0 432.5 1042.0 444.0C1042.0 455.5 1042.3 458.2 1045.0 469.4C1047.7 480.4 1049.1 482.7 1053.8 493.0C1058.8 504.1 1060.8 506.2 1066.5 516.9C1072.8 528.7 1074.9 530.9 1080.5 543.0C1084.3 551.3 1085.1 553.2 1087.5 562.0C1090.1 571.7 1090.2 574.0 1091.5 584.0C1092.8 594.1 1093.3 596.4 1093.3 606.6C1093.3 618.4 1093.3 621.1 1091.3 632.8C1089.2 644.8 1088.9 647.7 1084.3 659.0C1080.3 668.8 1078.3 670.5 1072.2 679.2C1067.4 686.0 1066.3 687.7 1060.1 693.3C1057.1 696.0 1054.9 694.4 1052.0 697.3C1047.4 701.9 1048.4 704.6 1044.0 709.4C1039.2 714.7 1038.1 716.0 1031.9 719.5C1023.4 724.3 1021.2 725.2 1011.7 727.6C1002.9 729.8 1000.7 729.0 991.6 729.6C981.6 730.3 979.3 729.0 969.4 730.6C965.4 731.3 965.4 734.0 961.4 734.6C949.1 736.5 945.4 735.5 932.4 736.4C924.2 737.0 922.5 737.6 914.3 738.0C900.5 738.7 896.2 739.8 883.5 739.0C879.9 738.8 879.9 735.8 876.3 735.5C867.3 734.6 865.3 736.0 856.3 736.4C846.5 736.8 843.7 735.5 834.6 737.3C831.4 737.9 832.2 741.1 829.0 741.8C821.1 743.6 819.1 743.2 811.0 742.7C805.2 742.4 804.2 740.0 798.4 740.0C794.1 740.0 789.3 742.7 789.3 742.7C789.3 742.7 792.4 736.4 789.3 735.5C780.9 733.1 774.9 733.4 764.0 735.5C759.7 736.3 761.0 741.0 756.7 741.8C748.6 743.2 746.8 740.0 738.6 740.0C731.2 740.0 729.5 743.0 722.3 741.8C718.9 741.2 715.5 739.4 717.0 736.4C718.8 732.8 722.6 732.7 727.8 731.0C734.1 729.0 736.3 730.9 742.3 728.2C745.0 727.0 747.8 725.0 745.9 722.8C742.3 718.6 737.3 719.8 731.4 715.5C728.1 713.1 726.0 708.3 726.0 708.3C726.0 708.3 713.2 713.5 702.4 716.5C694.4 718.7 692.5 718.6 684.3 720.0C677.8 721.1 676.4 722.5 669.8 721.9C663.7 721.3 662.9 718.9 657.0 717.4C651.5 716.0 649.6 718.0 644.5 715.5C642.0 714.3 641.5 712.7 641.8 710.0Z" fill="#0b0c0e"/>
<path d="M123.0 925.2C123.0 921.7 124.7 920.9 127.6 919.0C132.0 916.1 133.6 916.8 138.5 914.9C143.4 912.9 144.3 911.9 149.4 910.3C162.1 906.3 164.8 904.7 177.9 902.6C186.9 901.2 189.1 903.0 198.2 902.6C202.5 902.4 203.6 902.6 207.7 901.3C211.6 900.1 211.8 897.6 215.9 897.2C219.2 896.9 220.1 897.9 222.7 900.0C225.3 902.1 223.8 904.6 226.8 906.2C232.3 909.1 234.1 909.4 240.3 909.4C244.8 909.4 245.8 908.3 249.8 906.2C253.3 904.3 253.0 902.4 256.6 900.7C261.2 898.6 262.4 897.9 267.5 898.0C272.0 898.1 273.5 898.4 277.0 901.3C280.1 903.9 281.0 905.3 281.0 909.4C281.0 914.6 279.7 915.8 277.0 920.3C274.1 925.1 268.8 929.8 268.8 929.8C268.8 929.8 272.6 934.3 275.6 938.0C281.1 944.7 280.7 947.9 287.8 952.9C293.5 956.9 295.9 956.0 302.8 957.0C308.9 957.9 310.4 956.0 316.4 957.0C321.5 957.8 323.0 958.0 327.2 961.0C334.2 966.1 335.0 968.2 340.8 974.6C347.2 981.7 348.8 983.1 354.4 990.9C359.8 998.4 361.3 1000.1 365.2 1008.5C369.9 1018.5 370.7 1020.9 373.4 1031.6C376.2 1042.4 376.1 1045.0 377.4 1056.0C379.3 1071.9 379.6 1075.4 380.7 1091.4C381.5 1102.4 382.4 1104.9 381.5 1115.8C380.9 1123.3 380.1 1125.0 377.4 1132.0C375.8 1136.0 373.1 1135.8 372.0 1140.0C370.0 1147.2 371.6 1149.1 370.7 1156.5C369.7 1164.4 370.4 1166.4 367.9 1174.0C365.5 1181.3 364.3 1182.8 359.8 1189.0C356.9 1193.0 351.7 1196.5 351.7 1196.5C351.7 1196.5 361.9 1195.8 370.3 1196.2C383.9 1196.8 386.9 1197.3 400.5 1198.6C412.8 1199.8 415.4 1200.8 427.7 1201.6C440.0 1202.4 442.7 1202.0 455.0 1202.0C468.1 1202.0 471.1 1201.4 484.2 1201.6C496.7 1201.8 499.5 1202.3 512.0 1203.0C525.3 1203.8 528.3 1203.9 541.6 1205.0C557.1 1206.3 560.5 1206.8 576.0 1208.3C592.2 1209.9 595.8 1209.9 612.0 1212.0C618.5 1212.8 624.1 1212.7 626.2 1214.7C628.3 1216.7 622.1 1217.8 618.2 1218.0C606.1 1218.5 602.7 1217.0 590.0 1216.2C578.7 1215.5 576.3 1215.3 565.0 1214.6C553.6 1213.9 551.0 1213.4 539.6 1213.0C518.7 1212.2 514.1 1212.4 493.2 1212.0C479.6 1211.7 476.6 1211.4 463.0 1211.5C451.7 1211.6 449.2 1211.9 438.0 1212.3C427.0 1212.7 424.6 1212.9 413.6 1213.3C399.8 1213.9 396.7 1213.0 383.0 1214.5C371.7 1215.7 369.0 1215.9 358.2 1219.4C353.2 1221.0 352.6 1222.6 348.4 1225.8C346.2 1227.4 346.5 1228.8 344.0 1230.0C340.4 1231.7 339.4 1231.8 335.4 1232.0C331.1 1232.2 330.2 1231.5 325.9 1231.0C314.2 1229.6 300.0 1227.6 300.0 1227.6C300.0 1227.6 308.9 1223.6 313.6 1220.3C314.6 1219.6 315.3 1218.2 314.2 1217.6C309.7 1215.3 306.1 1216.2 300.0 1213.5C294.7 1211.2 293.9 1210.0 289.2 1206.7C286.6 1204.8 286.9 1203.0 283.8 1202.0C279.1 1200.5 277.7 1200.3 272.9 1201.3C269.9 1201.9 268.6 1202.6 267.5 1205.4C266.4 1208.2 269.7 1209.1 268.8 1212.0C267.7 1215.8 266.1 1216.1 263.4 1219.0C260.6 1222.0 260.5 1224.0 256.6 1225.0C248.3 1227.2 246.2 1226.0 237.6 1225.8C227.8 1225.5 225.7 1224.7 215.9 1223.9C206.7 1223.2 204.4 1224.7 195.5 1222.5C191.2 1221.4 188.3 1219.3 187.4 1216.8C186.5 1214.4 190.2 1214.9 192.8 1214.9C203.2 1214.7 207.0 1216.9 218.6 1216.2C229.1 1215.6 232.6 1214.7 241.7 1212.0C244.2 1211.3 246.9 1210.3 245.8 1208.0C242.6 1201.3 237.1 1199.9 232.2 1191.8C226.0 1181.5 225.1 1178.8 221.3 1167.4C217.7 1156.7 217.2 1154.2 215.9 1143.0C214.5 1131.4 215.3 1128.7 215.3 1117.0C215.3 1101.2 215.9 1081.9 215.9 1081.9C215.9 1081.9 208.5 1075.1 202.3 1069.6C198.1 1065.9 197.2 1064.9 192.8 1061.5C189.3 1058.8 187.4 1059.5 184.7 1056.0C182.4 1053.0 181.6 1051.6 182.5 1047.9C183.6 1043.6 186.0 1043.8 188.7 1040.3C190.7 1037.7 192.4 1037.5 192.8 1034.3C193.7 1027.0 192.4 1025.3 191.5 1018.0C190.6 1010.6 190.1 1009.0 188.7 1001.7C187.4 995.0 185.5 986.8 185.5 986.8C185.5 986.8 173.5 980.6 164.3 974.6C156.6 969.6 155.1 968.2 148.0 962.4C142.3 957.8 140.4 957.3 135.8 951.5C131.1 945.5 130.9 943.5 127.6 936.6C125.2 931.6 123.0 930.7 123.0 925.2Z" fill="#0b0c0e" stroke="#4f78e0" stroke-width="0.8"/>
<path d="M620.0 949.0C622.1 943.0 622.7 941.6 625.3 935.8C628.6 928.5 628.8 926.6 633.2 919.9C638.3 912.2 639.3 910.0 646.4 904.0C654.9 896.8 657.9 896.6 667.5 890.9C676.9 885.3 678.6 883.4 688.6 879.0C697.8 875.0 699.9 874.0 709.8 872.4C720.3 870.7 722.8 871.4 733.5 871.9C744.3 872.4 746.6 873.7 757.3 874.5C764.3 875.1 766.0 876.1 773.0 875.0C779.3 874.0 780.8 873.1 786.3 869.8C791.7 866.5 796.9 860.5 796.9 860.5C796.9 860.5 793.4 857.2 791.6 853.9C789.2 849.5 787.6 848.5 787.6 843.4C787.6 838.3 788.3 836.7 791.6 832.8C795.2 828.5 796.6 827.4 802.0 826.2C807.9 824.9 809.6 825.8 815.4 827.5C820.0 828.8 824.6 832.8 824.6 832.8C824.6 832.8 831.5 829.8 833.8 824.9C836.3 819.5 832.7 817.4 834.4 811.7C835.2 808.8 836.0 807.2 839.0 806.9C842.9 806.5 844.0 807.9 847.0 810.4C849.0 812.1 849.7 815.6 849.7 815.6C849.7 815.6 856.2 809.5 862.9 807.7C874.4 804.6 877.5 806.7 889.3 805.0C898.9 803.7 900.9 802.8 910.4 801.0C919.9 799.2 921.8 796.6 931.5 797.0C936.8 797.2 938.7 798.2 942.0 802.4C946.4 807.9 945.7 810.2 947.4 817.0C948.8 822.7 949.9 824.3 948.7 830.0C947.4 836.0 946.2 837.4 942.0 842.0C939.3 845.0 935.9 842.5 934.0 846.0C931.2 851.2 935.4 853.7 932.8 859.0C929.3 866.2 927.1 867.1 921.0 872.4C914.5 878.0 912.2 878.2 905.0 883.0C897.9 887.7 895.6 887.8 889.3 893.5C883.6 898.6 882.8 900.3 878.7 906.7C874.4 913.4 873.7 915.1 870.8 922.6C867.7 930.6 867.9 932.7 865.5 941.0C863.1 949.3 861.8 951.0 860.0 959.5C858.2 967.7 858.5 969.7 857.6 978.0C856.8 985.1 856.3 993.8 856.3 993.8C856.3 993.8 863.5 998.9 868.0 1004.4C872.4 1009.8 872.3 1011.8 876.0 1017.6C880.6 1024.8 884.4 1026.8 886.6 1033.4C887.4 1035.8 885.1 1038.1 882.7 1037.4C878.3 1036.1 873.4 1029.5 873.4 1029.5C873.4 1029.5 868.0 1033.4 868.0 1033.4C868.0 1033.4 860.0 1025.5 860.0 1025.5C860.0 1025.5 861.0 1035.7 861.5 1044.0C862.0 1052.3 860.6 1054.3 862.3 1062.5C863.6 1068.8 864.3 1070.4 868.0 1075.7C871.8 1081.2 875.4 1080.2 878.7 1086.0C881.1 1090.3 881.8 1093.2 880.0 1096.8C878.7 1099.5 876.1 1098.1 873.4 1096.8C869.2 1094.8 869.9 1091.6 865.5 1090.0C862.6 1089.0 861.5 1093.1 858.9 1091.5C855.5 1089.4 857.3 1086.9 855.0 1083.6C853.1 1080.8 851.2 1081.3 849.7 1078.3C846.3 1071.6 846.0 1069.8 844.4 1062.5C842.9 1055.5 845.7 1053.3 843.0 1046.6C840.7 1040.7 837.1 1041.4 833.8 1036.0C830.5 1030.6 831.6 1028.5 828.5 1022.9C825.6 1017.7 825.0 1016.4 820.6 1012.3C816.5 1008.5 815.2 1007.8 810.0 1005.7C805.5 1003.9 804.3 1003.6 799.5 1003.9C794.6 1004.2 793.1 1004.3 789.0 1007.0C783.3 1010.7 782.6 1012.3 778.4 1017.6C773.0 1024.3 773.6 1027.1 767.8 1033.4C761.6 1040.3 759.3 1040.9 752.0 1046.6C743.9 1052.8 733.5 1059.8 733.5 1059.8C733.5 1059.8 740.4 1063.7 746.7 1065.0C754.9 1066.7 756.9 1066.3 765.2 1066.4C774.7 1066.5 776.9 1064.1 786.3 1065.6C792.8 1066.6 794.1 1068.0 799.5 1071.7C803.5 1074.4 806.1 1076.1 806.9 1079.6C807.5 1082.1 804.5 1081.9 802.0 1082.3C800.1 1082.6 798.0 1081.0 798.0 1081.0C798.0 1081.0 794.2 1087.5 794.2 1087.5C794.2 1087.5 791.5 1085.6 789.0 1085.0C784.3 1083.8 783.2 1083.1 778.4 1083.6C771.1 1084.3 769.9 1087.5 762.6 1087.5C755.2 1087.5 753.8 1085.4 746.7 1083.6C739.6 1081.8 737.8 1082.0 730.9 1079.6C725.9 1077.9 724.6 1077.5 720.3 1074.4C716.2 1071.5 717.0 1068.5 712.4 1066.4C705.8 1063.5 703.8 1063.2 696.6 1063.8C688.5 1064.4 679.4 1069.0 679.4 1069.0C679.4 1069.0 680.6 1074.7 683.4 1078.3C687.3 1083.2 688.6 1084.1 693.9 1087.5C700.6 1091.9 703.0 1091.2 709.8 1095.5C714.4 1098.4 715.1 1099.5 719.0 1103.4C721.1 1105.5 723.0 1108.7 723.0 1108.7C723.0 1108.7 713.0 1107.0 713.0 1107.0C713.0 1107.0 713.7 1114.0 713.7 1114.0C713.7 1114.0 709.1 1113.7 706.0 1112.0C702.4 1110.0 699.2 1106.0 699.2 1106.0C699.2 1106.0 696.6 1115.3 696.6 1115.3C696.6 1115.3 692.5 1116.1 691.0 1114.0C688.9 1111.0 690.0 1106.0 690.0 1106.0C690.0 1106.0 684.0 1106.0 684.0 1106.0C684.0 1106.0 680.7 1114.0 680.7 1114.0C680.7 1114.0 677.4 1112.2 675.4 1110.0C672.0 1106.2 672.1 1104.6 668.8 1100.7C665.0 1096.2 663.5 1095.9 659.6 1091.5C654.6 1085.8 653.7 1084.3 649.0 1078.3C644.3 1072.3 643.9 1070.4 638.5 1065.0C634.3 1060.8 632.3 1061.1 627.9 1057.0C625.3 1054.6 625.3 1053.5 623.0 1050.7C620.1 1047.2 616.3 1043.0 616.3 1043.0C616.3 1043.0 610.6 1044.3 606.0 1045.6C598.3 1047.8 596.6 1048.3 589.0 1050.7C584.5 1052.1 583.7 1053.7 579.0 1054.0C570.5 1054.5 568.6 1053.8 560.2 1052.4C552.4 1051.1 550.7 1050.6 543.2 1048.0C535.3 1045.2 533.3 1044.9 526.2 1040.5C520.2 1036.8 518.9 1035.7 514.3 1030.3C509.6 1024.8 508.7 1023.3 505.8 1016.7C503.3 1010.9 503.4 1009.3 502.4 1003.0C501.5 997.7 501.4 996.5 501.6 991.2C501.8 987.7 505.0 986.7 503.3 983.6C501.5 980.3 499.4 980.3 495.6 980.2C487.9 979.9 486.2 981.6 478.6 982.7C468.7 984.2 466.4 984.3 456.5 986.0C448.8 987.3 447.2 988.1 439.5 989.5C431.9 990.8 429.9 989.8 422.5 992.0C414.5 994.4 413.3 996.6 405.5 999.7C399.5 1002.0 397.8 1003.1 391.9 1004.0C389.9 1004.3 387.3 1004.3 387.7 1002.3C388.3 999.7 390.6 998.6 393.6 996.3C398.6 992.4 399.8 991.4 405.5 988.7C412.8 985.2 414.7 985.0 422.5 982.7C433.9 979.3 436.6 979.1 448.0 975.9C459.5 972.6 461.9 971.3 473.5 968.3C482.6 965.9 484.6 965.0 493.9 964.0C499.2 963.4 500.6 963.4 505.8 964.9C510.1 966.2 511.2 966.8 514.3 970.0C517.6 973.5 518.0 974.7 519.4 979.3C520.8 983.7 519.6 984.9 520.3 989.5C521.2 995.6 520.7 997.2 522.8 1003.0C524.9 1008.8 525.4 1010.4 529.6 1015.0C534.0 1019.9 535.6 1020.5 541.5 1023.5C548.8 1027.1 550.5 1027.9 558.5 1029.5C566.0 1031.0 567.9 1031.4 575.5 1030.3C582.0 1029.3 583.4 1028.4 589.0 1025.0C595.0 1021.4 596.4 1020.3 601.0 1015.0C605.8 1009.5 607.2 1008.2 609.6 1001.4C612.2 994.1 610.8 992.0 612.0 984.4C613.5 975.2 613.4 973.1 615.5 964.0C617.1 957.1 617.7 955.7 620.0 949.0Z" fill="#0b0c0e"/>
<path d="M956.0 990.0C960.7 977.3 961.9 974.5 968.0 962.4C975.2 948.2 976.5 944.8 985.6 931.8C994.4 919.2 997.8 917.5 1007.5 905.6C1015.5 895.8 1017.3 893.7 1025.0 883.7C1031.0 875.9 1032.5 874.2 1038.0 866.0C1041.8 860.4 1045.8 853.0 1045.8 853.0C1045.8 853.0 1043.6 848.7 1043.6 848.7C1043.6 848.7 1047.8 842.7 1051.2 837.8C1053.7 834.3 1056.7 830.0 1056.7 830.0C1056.7 830.0 1054.0 829.0 1054.0 829.0C1054.0 829.0 1058.3 822.9 1062.0 818.0C1063.5 816.0 1065.4 813.7 1065.4 813.7C1065.4 813.7 1063.0 812.5 1063.0 812.5C1063.0 812.5 1068.9 803.7 1073.0 796.0C1076.0 790.4 1076.7 789.1 1078.6 783.0C1079.3 780.7 1079.2 780.0 1078.6 777.6C1077.7 774.0 1075.6 773.7 1075.3 770.0C1075.1 766.9 1075.5 765.8 1077.5 763.4C1079.7 760.8 1080.7 760.5 1084.0 759.5C1088.3 758.2 1093.9 758.6 1093.9 758.6C1093.9 758.6 1097.8 754.3 1101.5 751.4C1108.1 746.2 1109.4 744.6 1116.8 740.5C1126.2 735.2 1128.7 734.6 1138.7 730.6C1148.4 726.7 1150.8 726.4 1160.6 723.0C1167.0 720.8 1168.0 717.7 1174.8 718.0C1178.8 718.2 1179.3 720.6 1181.3 724.0C1183.9 728.5 1183.1 730.1 1184.6 735.0C1185.5 738.0 1187.3 738.5 1186.8 741.6C1186.2 745.5 1184.6 745.9 1182.4 749.2C1181.0 751.3 1179.6 751.2 1179.0 753.6C1178.0 757.9 1180.1 759.1 1179.0 763.4C1177.6 768.7 1176.6 769.7 1173.7 774.4C1169.3 781.6 1167.7 782.8 1162.8 789.7C1157.9 796.6 1156.5 797.9 1151.8 805.0C1148.6 809.8 1147.0 810.5 1145.3 816.0C1143.0 823.5 1143.6 825.5 1143.0 833.4C1142.5 840.3 1142.3 841.8 1143.0 848.7C1143.9 857.7 1144.8 859.5 1146.4 868.4C1147.8 876.3 1147.8 878.1 1149.6 886.0C1150.3 889.0 1150.5 889.7 1151.8 892.5C1154.5 898.5 1154.4 900.3 1158.4 905.6C1163.4 912.3 1165.6 912.8 1171.5 918.7C1176.4 923.6 1178.1 924.2 1182.4 929.6C1186.0 934.1 1186.9 935.2 1189.0 940.6C1190.4 944.3 1191.1 946.0 1190.0 949.3C1189.4 951.2 1187.2 951.7 1185.7 950.4C1182.5 947.5 1183.7 944.3 1180.3 940.6C1178.1 938.2 1176.8 938.6 1173.7 937.3C1170.8 936.1 1170.2 935.0 1167.0 935.0C1164.4 935.0 1164.2 937.8 1161.7 937.3C1159.0 936.7 1159.5 934.7 1157.3 933.0C1155.0 931.2 1154.6 930.3 1151.8 929.6C1146.1 928.2 1144.6 928.5 1138.7 928.5C1133.8 928.5 1132.1 927.2 1127.8 929.6C1123.4 932.0 1123.7 934.2 1121.0 938.4C1116.8 945.0 1116.2 946.7 1112.5 953.7C1109.4 959.5 1109.7 961.3 1106.0 966.8C1101.6 973.4 1099.2 973.8 1094.6 980.4C1089.9 987.1 1089.2 988.9 1085.5 996.2C1083.5 1000.1 1083.1 1001.0 1082.0 1005.2C1080.0 1013.2 1080.9 1015.3 1078.7 1023.3C1076.4 1031.7 1075.6 1033.5 1071.9 1041.4C1068.4 1048.9 1067.5 1050.5 1062.9 1057.3C1059.3 1062.7 1057.6 1063.3 1053.8 1068.6C1052.1 1071.0 1050.5 1074.3 1050.5 1074.3C1050.5 1074.3 1054.8 1075.3 1058.4 1075.8C1064.5 1076.6 1065.9 1076.1 1071.9 1077.0C1078.1 1077.9 1079.5 1078.1 1085.5 1079.9C1088.8 1080.9 1090.5 1080.9 1092.3 1083.3C1093.4 1084.7 1092.7 1086.4 1091.0 1087.0C1086.5 1088.5 1084.2 1087.6 1078.7 1087.8C1071.6 1088.0 1070.0 1087.3 1062.9 1087.8C1056.7 1088.3 1049.3 1090.0 1049.3 1090.0C1049.3 1090.0 1051.7 1094.2 1052.7 1098.0C1053.7 1101.9 1054.0 1102.9 1053.8 1107.0C1053.5 1111.2 1051.6 1116.0 1051.6 1116.0C1051.6 1116.0 1049.0 1108.0 1049.0 1108.0C1049.0 1108.0 1048.3 1111.4 1047.0 1113.8C1045.6 1116.6 1043.0 1119.5 1043.0 1119.5C1043.0 1119.5 1040.4 1116.3 1038.0 1113.8C1035.0 1110.6 1031.0 1107.0 1031.0 1107.0C1031.0 1107.0 1027.0 1113.8 1027.0 1113.8C1027.0 1113.8 1027.2 1108.8 1026.7 1104.8C1026.1 1100.1 1027.1 1098.4 1024.4 1094.6C1021.6 1090.7 1018.9 1092.2 1015.4 1089.0C1012.2 1086.0 1013.5 1083.2 1009.7 1081.0C1006.6 1079.2 1005.3 1080.6 1001.8 1081.0C996.6 1081.6 995.6 1082.2 990.5 1083.3C983.4 1084.8 981.6 1084.5 974.7 1086.7C967.3 1089.1 965.4 1089.4 958.8 1093.5C952.0 1097.7 951.1 1099.5 945.2 1104.8C938.9 1110.4 937.6 1111.8 931.6 1117.8C925.6 1123.8 924.5 1125.4 918.5 1131.5C912.0 1138.1 910.6 1139.6 904.0 1146.0C896.0 1153.8 894.3 1155.6 886.0 1163.0C878.1 1170.0 875.8 1170.9 868.0 1178.0C860.9 1184.5 860.1 1186.8 853.0 1193.3C844.5 1201.2 842.7 1203.1 833.4 1210.0C823.6 1217.3 821.0 1218.5 810.7 1225.0C800.6 1231.4 798.8 1233.6 788.0 1238.7C781.6 1241.7 779.8 1241.4 772.9 1243.0C766.2 1244.5 764.7 1245.3 757.8 1245.5C751.0 1245.7 749.5 1245.0 742.7 1244.0C737.5 1243.3 732.9 1243.7 731.3 1241.7C729.7 1239.7 734.7 1238.8 738.0 1238.0C743.3 1236.7 744.8 1237.8 750.2 1237.0C760.5 1235.4 762.9 1235.5 772.9 1232.6C783.4 1229.5 785.8 1228.5 795.6 1223.6C806.2 1218.3 808.5 1216.8 818.2 1210.0C828.9 1202.5 831.1 1200.5 840.9 1191.8C848.1 1185.4 849.5 1183.8 856.0 1176.7C863.1 1168.9 863.8 1166.4 871.0 1158.6C880.8 1148.0 883.4 1146.0 893.8 1136.0C903.9 1126.3 906.6 1124.7 916.5 1114.8C922.7 1108.6 923.9 1107.1 929.4 1100.3C933.3 1095.5 935.1 1094.8 937.3 1089.0C939.8 1082.2 938.4 1080.2 939.6 1073.0C941.0 1064.9 941.6 1063.1 943.0 1055.0C945.1 1042.8 945.3 1040.1 947.5 1027.9C949.4 1017.7 949.7 1015.4 952.0 1005.2C953.5 998.3 953.5 996.6 956.0 990.0Z" fill="#0b0c0e"/>
<path d="M1023.5 1071.500l6-1.5 2 5 2.5 6-4-1-4.5-4z" fill="#fff"/>
<rect x="123" y="896.5" width="506.5" height="335.5" fill="none" stroke="#5b82e6" stroke-width="1.3"/>
<path d="M120.5 922.7h5v5h-5zM125.1 934.1h5v5h-5zM136 912.4h5v5h-5zM146.9 907.8h5v5h-5zM175.4 900.1h5v5h-5zM195.7 900.1h5v5h-5zM202.5 900.1h5v5h-5zM224.3 903.7h5v5h-5zM237.8 906.9h5v5h-5zM247.3 903.7h5v5h-5zM266.3 927.3h5v5h-5zM285.3 950.4h5v5h-5zM289.4 953.6h5v5h-5zM324.7 958.5h5v5h-5zM338.8 972.9h5v5h-5zM362.7 1006h5v5h-5zM374.9 1053h5v5h-5zM378.2 1088.3h5v5h-5zM370.3 1136.9h5v5h-5zM365.4 1171.7h5v5h-5zM350 1193.9h5v5h-5zM368.2 1193.9h5v5h-5zM355.1 1217.8h5v5h-5zM345.9 1223.3h5v5h-5zM332.9 1229.5h5v5h-5zM323.4 1229.2h5v5h-5zM297.5 1225.1h5v5h-5zM311.7 1215.1h5v5h-5zM281.3 1200.2h5v5h-5zM266.3 1209.7h5v5h-5zM260.9 1216.5h5v5h-5zM254.1 1222.5h5v5h-5zM235.1 1223.8h5v5h-5zM213.4 1221.4h5v5h-5zM193 1220h5v5h-5zM186.2 1215.1h5v5h-5zM190.3 1212.4h5v5h-5zM216.1 1213.7h5v5h-5zM239.2 1209.7h5v5h-5zM229.7 1189.9h5v5h-5zM212.8 1114.7h5v5h-5zM212.8 1078.5h5v5h-5zM190.3 1059.5h5v5h-5zM186.2 1037.8h5v5h-5zM190.3 1031.8h5v5h-5zM183 983.8h5v5h-5zM145 959.3h5v5h-5zM425.2 1199.3h5v5h-5zM481.7 1198.7h5v5h-5zM539.1 1202.2h5v5h-5zM609.5 1208.8h5v5h-5zM620.7 1210.3h5v5h-5zM616.7 1215.5h5v5h-5zM587.5 1213.8h5v5h-5zM537.1 1210.8h5v5h-5zM490.7 1209.8h5v5h-5zM460.5 1208.8h5v5h-5zM411.1 1210.8h5v5h-5z" fill="#4f7df0"/>
<rect x="119.5" y="893" width="7" height="7" fill="#fff" stroke="#4f78e0" stroke-width="1.2"/><rect x="372.8" y="893" width="7" height="7" fill="#fff" stroke="#4f78e0" stroke-width="1.2"/><rect x="626" y="893" width="7" height="7" fill="#fff" stroke="#4f78e0" stroke-width="1.2"/><rect x="119.5" y="1060.8" width="7" height="7" fill="#fff" stroke="#4f78e0" stroke-width="1.2"/><rect x="626" y="1060.8" width="7" height="7" fill="#fff" stroke="#4f78e0" stroke-width="1.2"/><rect x="119.5" y="1228.5" width="7" height="7" fill="#fff" stroke="#4f78e0" stroke-width="1.2"/><rect x="372.8" y="1228.5" width="7" height="7" fill="#fff" stroke="#4f78e0" stroke-width="1.2"/><rect x="626" y="1228.5" width="7" height="7" fill="#fff" stroke="#4f78e0" stroke-width="1.2"/>
</svg>
<!-- V SCROLLBAR -->
<div class="a" style="left:1525px;top:116px;width:18px;height:1187px;background:#efefef;border-left:1px solid #e2e2e2;border-right:1px solid #fff;box-sizing:border-box"></div>
<div class="a arr" style="left:1529px;top:125px;border-top:0;border-bottom:5px solid #333;border-left-width:5px;border-right-width:5px"></div>
<div class="a arr" style="left:1529px;top:1289px;border-top:5px solid #333;border-left-width:5px;border-right-width:5px"></div>
<div class="a" style="left:1525px;top:700px;width:17px;height:18px;background:linear-gradient(90deg,#fafafa,#d9d9d9);border:1px solid #9a9a9a;box-sizing:border-box;border-radius:2px"></div>
<div class="a" style="left:1525px;top:1303px;width:18px;height:19px;background:#fff"></div>
<!-- RIGHT DOCK -->
<div class="a" style="left:1543px;top:90px;width:2px;height:1232px;background:#3c3c3c"></div>
<div class="a" style="left:1545px;top:90px;width:43px;height:1232px;background:#646464"></div>
<div class="a" style="left:1545px;top:90px;width:43px;height:15px;background:linear-gradient(#3a3a3a,#505050)"></div>
<div class="a" style="left:1546px;top:106px;width:42px;height:55px;background:#d4d4d4"></div>
<div class="a" style="left:1546px;top:164px;width:42px;height:94px;background:#d4d4d4"></div>
<div class="a" style="left:1551px;top:110px;width:36px;height:1px;background:repeating-linear-gradient(90deg,#999 0 1px,transparent 1px 2.6px)"></div><div class="a" style="left:1551px;top:113px;width:36px;height:1px;background:repeating-linear-gradient(90deg,#999 0 1px,transparent 1px 2.6px)"></div><div class="a" style="left:1545px;top:104px;width:43px;height:2px;background:#1e1e1e"></div>
<div class="a" style="left:1551px;top:168px;width:36px;height:1px;background:repeating-linear-gradient(90deg,#999 0 1px,transparent 1px 2.6px)"></div><div class="a" style="left:1551px;top:171px;width:36px;height:1px;background:repeating-linear-gradient(90deg,#999 0 1px,transparent 1px 2.6px)"></div>
<svg width="1588" height="300">
<path d="M1581 94l-4 3.5 4 3.500zM1587 94l-4 3.5 4 3.500z" fill="#ddd"/>
<path d="M14 94l4 3.5-4 3.500zM9 94l4 3.5-4 3.500z" fill="#ddd"/>
<path d="M1557 131.500h22" stroke="#333" stroke-width="1.5" stroke-dasharray="2 1"/><path d="M1557 137h22M1557 143h22M1557 148h22" stroke="#222" stroke-width="3"/>
<circle cx="1568" cy="196" r="10.5" fill="#d0d0d0" stroke="#555" stroke-width="1.2" stroke-dasharray="1.5 1.2"/><circle cx="1568" cy="196" r="7.5" fill="#333"/><circle cx="1566" cy="194" r="3" fill="#666"/>
<rect x="1562.5" y="227.5" width="16" height="16" fill="#f4f4f4" stroke="#555"/><rect x="1557.5" y="237.5" width="7" height="7" fill="#ddd" stroke="#222" stroke-width="1.3"/><rect x="1561" y="241" width="6" height="5" fill="#ccc" stroke="#444"/>
</svg>
<!-- STATUS BAR -->
<div class="a" style="left:0;top:1322px;width:1588px;height:2px;background:#5a5a5a"></div><div class="a" style="left:0;top:1324px;width:1588px;height:2px;background:#ececec"></div><div class="a" style="left:51px;top:1303px;width:1474px;height:19px;background:#ebebeb"></div>
<div class="a wbox" style="left:51px;top:1303px;width:77px;height:20px;border-color:#ccc"></div>
<div class="t" style="left:59px;top:1309px;font-size:13px">99%</div>
<div class="a arr" style="left:113px;top:1314px;border-top-color:#000;border-left-width:5px;border-right-width:5px"></div>
<div class="a wbox" style="left:171px;top:1303px;width:58px;height:20px;border-color:#ccc"></div>
<div class="t" style="left:178px;top:1309px;font-size:13px">1</div>
<div class="a arr" style="left:213px;top:1314px;border-top-color:#000;border-left-width:5px;border-right-width:5px"></div>
<div class="a" style="left:272px;top:1304px;width:231px;height:18px;background:#d2d2d2;border:1px solid #bbb;box-sizing:border-box"></div>
<div class="t" style="left:365px;top:1307px;font-size:13px;color:#222">Selection</div>
<svg width="1588" height="1326">
<path d="M134 1308v9M141 1307.500l-5 5 5 5z" fill="#9a9a9a" stroke="#9a9a9a" stroke-width="1.3"/>
<path d="M164 1307.500l-5 5 5 5z" fill="#9a9a9a"/>
<path d="M236 1307.500l5 5-5 5z" fill="#9a9a9a"/>
<path d="M263 1308v9M256 1307.500l5 5-5 5z" fill="#9a9a9a" stroke="#9a9a9a" stroke-width="1.3"/>
<path d="M492 1306.500l6 6-6 6z" fill="#111"/>
<path d="M520 1307.500l-5 4.5 5 4.500z" fill="#222"/>
<path d="M1509 1307.500l5 4.5-5 4.500z" fill="#222"/>
</svg>
<div class="a" style="left:1011px;top:1304px;width:19px;height:17px;background:linear-gradient(#fafafa,#d2d2d2);border:1px solid #9a9a9a;box-sizing:border-box;border-radius:2px"></div>
<div class="a" style="left:1211px;top:284px;width:303px;height:688px;background:#d4d4d4;border:1px solid #333;box-sizing:border-box;border-radius:4px 4px 0 0;box-shadow:0 0 0 1px rgba(0,0,0,.25)"></div>
<div class="a" style="left:1212px;top:285px;width:301px;height:15px;background:linear-gradient(#2f2f2f,#4e4e4e);border-radius:3px 3px 0 0"></div>
<div class="a" style="left:1212px;top:300px;width:301px;height:22px;background:linear-gradient(#8e8e8e,#7b7b7b)"></div>
<div class="a" style="left:1212px;top:300px;width:65px;height:23px;background:linear-gradient(#e2e2e2,#d6d6d6)"></div>
<div class="a" style="left:1277px;top:300px;width:98px;height:22px;background:linear-gradient(#a2a2a2,#8c8c8c);border-left:1px solid #6a6a6a;border-right:1px solid #6a6a6a;box-sizing:border-box"></div>
<div class="t" style="left:1221px;top:305px;font-size:12px;color:#333;-webkit-text-stroke:.4px #333;letter-spacing:.2px">LAYERS</div>
<div class="t" style="left:1286px;top:305px;font-size:12.5px;color:#3c3c3c;-webkit-text-stroke:.4px #3c3c3c;letter-spacing:.2px">ARTBOARDS</div>
<div class="a" style="left:1213px;top:322px;width:277px;height:3px;background:#e0e0e0;border-bottom:1px solid #777;box-sizing:border-box"></div>
<div class="a" style="left:1273px;top:325px;width:217px;height:208px;background:#fff"></div>
<div class="a" style="left:1214px;top:325px;width:58px;height:208px;background:#c9c9c9"></div>
<div class="a" style="left:1272px;top:324px;width:2px;height:210px;background:#222"></div>
<div class="a" style="left:1214px;top:533px;width:276px;height:1px;background:#111"></div>
<div class="a" style="left:1490px;top:323px;width:22px;height:622px;background:#efefef"></div>
<div class="a" style="left:1274px;top:325px;width:19px;height:26px;background:#d9d9d9"></div>
<div class="a" style="left:1293px;top:325px;width:197px;height:27px;background:#3595f5"></div>
<div class="t" style="left:1322px;top:331px;font-size:13.5px;font-weight:bold;color:#fff">Layer 1</div>
<div class="t" style="left:1342px;top:357.5px;font-size:13.3px;color:#111">&lt;Path&gt;</div>
<div class="t" style="left:1342px;top:383.6px;font-size:13.3px;color:#111">&lt;Path&gt;</div>
<div class="a" style="left:1313px;top:377px;width:177px;height:1px;background:#9a9a9a"></div>
<div class="t" style="left:1342px;top:409.7px;font-size:13.3px;color:#111">&lt;Path&gt;</div>
<div class="a" style="left:1313px;top:403px;width:177px;height:1px;background:#9a9a9a"></div>
<div class="t" style="left:1342px;top:435.8px;font-size:13.3px;color:#111">&lt;Path&gt;</div>
<div class="a" style="left:1313px;top:429px;width:177px;height:1px;background:#9a9a9a"></div>
<div class="t" style="left:1342px;top:461.9px;font-size:13.3px;color:#111">&lt;Path&gt;</div>
<div class="a" style="left:1313px;top:455px;width:177px;height:1px;background:#9a9a9a"></div>
<div class="t" style="left:1342px;top:488px;font-size:13.3px;color:#111">&lt;Compound Path&gt;</div>
<div class="a" style="left:1313px;top:482px;width:177px;height:1px;background:#9a9a9a"></div>
<div class="t" style="left:1342px;top:514.1px;font-size:13.3px;color:#111">&lt;Path&gt;</div>
<div class="a" style="left:1313px;top:508px;width:177px;height:1px;background:#9a9a9a"></div>
<svg width="1588" height="1326" viewBox="0 0 1588 1326">
<path d="M1482 288.500l-4 3.5 4 3.500zM1488 288.500l-4 3.5 4 3.500z" fill="#ddd"/><path d="M1494.5 287v10" stroke="#666"/><path d="M1501 288l8 8M1509 288l-8 8" stroke="#eee" stroke-width="2"/>
<path d="M1490 309.500l6 0-3 4z" fill="#333"/><path d="M1497 307.500h10M1497 311.500h10M1497 315.500h10" stroke="#333" stroke-width="1.5"/>
<path d="M1496 340.500l5-5 5 5z" fill="#555"/><path d="M1496 931l5 5 5-5z" fill="#888"/>
<rect x="1216.5" y="328.5" width="19" height="20" fill="#d0d0d0" stroke="#aaa"/>
<rect x="1240.5" y="328.5" width="17" height="20" fill="#d8d8d8" stroke="#b0b0b0"/>
<rect x="1261" y="328" width="6" height="21" fill="#4a7cf0"/>
<path d="M1218 338.5 q8.5-9 17 0 q-8.5 8-17 0z" fill="#f0f0f0" stroke="#222" stroke-width="1.1"/><circle cx="1226.5" cy="338.5" r="3.8" fill="#111"/><path d="M1218.5 335.5q8-8 16 0" fill="none" stroke="#222" stroke-width="1.6"/>
<path d="M1277.5 334.500h12l-6 7.500z" fill="#fff" stroke="#555" stroke-width="1.1"/>
<rect x="1295.5" y="328.5" width="20" height="20" fill="#fff" stroke="#111" stroke-width="1.4"/>
<path d="M1297 331l5 1 3-2 2 3-4 2-5-1zM1306 333l6-2 2 3-5 2zM1297 338l6 0 4 3-3 3-6-2zM1308 339l6 1-1 5-5-1zM1299 345l5 1 2 2-6 0z" fill="#111"/>
<circle cx="1465.5" cy="338" r="5.3" fill="none" stroke="#1d4fa0" stroke-width="1.3"/>
<path d="M1482 325h8v8z" fill="#111"/><circle cx="1483" cy="339" r="1.8" fill="#5a8cf5"/>
<rect x="1216.5" y="354.5" width="19" height="20" fill="#d0d0d0" stroke="#aaa"/>
<rect x="1240.5" y="354.5" width="17" height="20" fill="#d8d8d8" stroke="#b0b0b0"/>
<rect x="1261" y="354" width="6" height="21" fill="#4a7cf0"/>
<path d="M1218 364.6 q8.5-9 17 0 q-8.5 8-17 0z" fill="#f0f0f0" stroke="#222" stroke-width="1.1"/><circle cx="1226.5" cy="364.6" r="3.8" fill="#111"/><path d="M1218.5 361.6q8-8 16 0" fill="none" stroke="#222" stroke-width="1.6"/>
<rect x="1315.5" y="353.5" width="20" height="20" fill="#fff" stroke="#111" stroke-width="1.4"/>
<circle cx="1465.5" cy="364.1" r="5.3" fill="#fff" stroke="#555" stroke-width="1.4"/>
<rect x="1216.5" y="380.5" width="19" height="20" fill="#d0d0d0" stroke="#aaa"/>
<rect x="1240.5" y="380.5" width="17" height="20" fill="#d8d8d8" stroke="#b0b0b0"/>
<rect x="1261" y="380" width="6" height="21" fill="#4a7cf0"/>
<path d="M1218 390.7 q8.5-9 17 0 q-8.5 8-17 0z" fill="#f0f0f0" stroke="#222" stroke-width="1.1"/><circle cx="1226.5" cy="390.7" r="3.8" fill="#111"/><path d="M1218.5 387.7q8-8 16 0" fill="none" stroke="#222" stroke-width="1.6"/>
<rect x="1315.5" y="379.5" width="20" height="20" fill="#fff" stroke="#111" stroke-width="1.4"/>
<circle cx="1465.5" cy="390.2" r="5.3" fill="#fff" stroke="#555" stroke-width="1.4"/>
<circle cx="1465.5" cy="390.2" r="8" fill="none" stroke="#555" stroke-width="1.2"/>
<rect x="1479.5" y="386.7" width="8" height="8" fill="#3f7cf0" stroke="#223" stroke-width="1"/>
<rect x="1216.5" y="406.5" width="19" height="20" fill="#d0d0d0" stroke="#aaa"/>
<rect x="1240.5" y="406.5" width="17" height="20" fill="#d8d8d8" stroke="#b0b0b0"/>
<rect x="1261" y="406" width="6" height="21" fill="#4a7cf0"/>
<path d="M1218 416.8 q8.5-9 17 0 q-8.5 8-17 0z" fill="#f0f0f0" stroke="#222" stroke-width="1.1"/><circle cx="1226.5" cy="416.8" r="3.8" fill="#111"/><path d="M1218.5 413.8q8-8 16 0" fill="none" stroke="#222" stroke-width="1.6"/>
<rect x="1315.5" y="405.5" width="20" height="20" fill="#fff" stroke="#111" stroke-width="1.4"/>
<circle cx="1465.5" cy="416.3" r="5.3" fill="#fff" stroke="#555" stroke-width="1.4"/>
<rect x="1216.5" y="432.5" width="19" height="20" fill="#d0d0d0" stroke="#aaa"/>
<rect x="1240.5" y="432.5" width="17" height="20" fill="#d8d8d8" stroke="#b0b0b0"/>
<rect x="1261" y="432" width="6" height="21" fill="#4a7cf0"/>
<path d="M1218 442.9 q8.5-9 17 0 q-8.5 8-17 0z" fill="#f0f0f0" stroke="#222" stroke-width="1.1"/><circle cx="1226.5" cy="442.9" r="3.8" fill="#111"/><path d="M1218.5 439.9q8-8 16 0" fill="none" stroke="#222" stroke-width="1.6"/>
<rect x="1315.5" y="431.5" width="20" height="20" fill="#fff" stroke="#111" stroke-width="1.4"/>
<circle cx="1465.5" cy="442.4" r="5.3" fill="#fff" stroke="#555" stroke-width="1.4"/>
<rect x="1216.5" y="459.5" width="19" height="20" fill="#d0d0d0" stroke="#aaa"/>
<rect x="1240.5" y="459.5" width="17" height="20" fill="#d8d8d8" stroke="#b0b0b0"/>
<rect x="1261" y="459" width="6" height="21" fill="#4a7cf0"/>
<path d="M1218 469 q8.5-9 17 0 q-8.5 8-17 0z" fill="#f0f0f0" stroke="#222" stroke-width="1.1"/><circle cx="1226.5" cy="469" r="3.8" fill="#111"/><path d="M1218.5 466q8-8 16 0" fill="none" stroke="#222" stroke-width="1.6"/>
<rect x="1315.5" y="458.5" width="20" height="20" fill="#fff" stroke="#111" stroke-width="1.4"/>
<circle cx="1465.5" cy="468.5" r="5.3" fill="#fff" stroke="#555" stroke-width="1.4"/>
<rect x="1216.5" y="485.5" width="19" height="20" fill="#d0d0d0" stroke="#aaa"/>
<rect x="1240.5" y="485.5" width="17" height="20" fill="#d8d8d8" stroke="#b0b0b0"/>
<rect x="1261" y="485" width="6" height="21" fill="#4a7cf0"/>
<path d="M1218 495.1 q8.5-9 17 0 q-8.5 8-17 0z" fill="#f0f0f0" stroke="#222" stroke-width="1.1"/><circle cx="1226.5" cy="495.1" r="3.8" fill="#111"/><path d="M1218.5 492.1q8-8 16 0" fill="none" stroke="#222" stroke-width="1.6"/>
<rect x="1315.5" y="484.5" width="20" height="20" fill="#fff" stroke="#111" stroke-width="1.4"/>
<circle cx="1465.5" cy="494.6" r="5.3" fill="#fff" stroke="#555" stroke-width="1.4"/>
<rect x="1216.5" y="511.5" width="19" height="20" fill="#d0d0d0" stroke="#aaa"/>
<rect x="1240.5" y="511.5" width="17" height="20" fill="#d8d8d8" stroke="#b0b0b0"/>
<rect x="1261" y="511" width="6" height="21" fill="#4a7cf0"/>
<path d="M1218 521.2 q8.5-9 17 0 q-8.5 8-17 0z" fill="#f0f0f0" stroke="#222" stroke-width="1.1"/><circle cx="1226.5" cy="521.2" r="3.8" fill="#111"/><path d="M1218.5 518.2q8-8 16 0" fill="none" stroke="#222" stroke-width="1.6"/>
<rect x="1315.5" y="510.5" width="20" height="20" fill="#fff" stroke="#111" stroke-width="1.4"/>
<circle cx="1465.5" cy="520.7" r="5.3" fill="#fff" stroke="#555" stroke-width="1.4"/>
<path transform="translate(1297.1 349) scale(0.0310)" d="M641.8 710L671.6 641.3L705 597.9L727.8 557L763 567L784 568.9L807.4 543.5L830.4 537.7L900.9 546.2L961.4 586.5L1001.7 636.9L1019.8 670.1L1046 677.2L1070.2 620.8L1060.1 544.2L1027.7 456.7L1045 389L1110.9 347.7L1174.2 383.8L1190 440.9L1179.8 428.2L1145.7 369.6L1088.7 364.8L1045 418.7L1053.8 493L1087.5 562L1091.3 632.8L1060.1 693.3L1031.9 719.5L969.4 730.6L914.3 738L856.3 736.4L811 742.7L789.3 735.5L738.6 740L727.8 731L731.4 715.5L684.3 720L644.5 715.5Z" fill="#0b0c0e"/>
<path transform="translate(1312.8 356.4) scale(0.0338)" d="M123 925.2L149.4 910.3L207.7 901.3L226.8 906.2L256.6 900.7L281 909.4L275.6 938L316.4 957L354.4 990.9L377.4 1056L377.4 1132L367.9 1174L370.3 1196.2L455 1202L541.6 1205L626.2 1214.7L565 1214.6L463 1211.5L383 1214.5L344 1230L300 1227.6L300 1213.5L272.9 1201.3L263.4 1219L215.9 1223.9L192.8 1214.9L245.8 1208L215.9 1143L202.3 1069.6L182.5 1047.9L191.5 1018L164.3 974.6L127.6 936.6Z" fill="#0b0c0e"/>
<path transform="translate(1312.2 409.6) scale(0.0356)" d="M134.7 345.3L174.9 277.6L192.5 243.3L217.5 248.2L270.5 225.4L313.4 195.2L363.7 180.7L418.8 191.4L452 213L471.8 240.4L477.6 263.9L485.5 293.3L522.7 336.5L595.3 362L609 389.4L536.5 403L418.8 405L399.2 398.2L516.9 391.4L592.4 376.7L536.5 362L489.4 362L438.4 367.8L383.5 372.7L365 374.7L335.7 364L286.7 372.7L265 377.6L241.6 376.7L264 364L247.5 354L198.4 368.8L165 360Z" fill="#0b0c0e"/>
<path transform="translate(1312.6 422.8) scale(0.0319)" d="M138.3 626.2L176 595.8L229 578L244.6 552.6L261.7 560.5L272 579L321 589.9L380 568L452.4 579L495.8 636.9L524.8 711.7L597.2 750.3L662.3 791.3L668.4 839.6L658.7 834.7L638.2 791.3L573 764.8L505.5 745.5L450 757.5L404 769.6L371 774L349.5 767.4L356 753.5L404 755.6L392 746.7L332.8 730L279.9 754.6L252.5 776.2L234.8 776.2L231 763.4L219 756.6L250.5 740.9L259.3 707.5L223 665.4L172 653.6L139.7 633Z" fill="#0b0c0e"/>
<path transform="translate(1305.3 443.2) scale(0.0303)" d="M620 949L646.4 904L709.8 872.4L773 875L791.6 853.9L802 826.2L833.8 824.9L847 810.4L889.3 805L942 802.4L942 842L921 872.4L878.7 906.7L860 959.5L868 1004.4L882.7 1037.4L860 1025.5L868 1075.7L873.4 1096.8L855 1083.6L843 1046.6L820.6 1012.3L789 1007L752 1046.6L765.2 1066.4L806.9 1079.6L794.2 1087.5L762.6 1087.5L720.3 1074.4L679.4 1069L709.8 1095.5L713 1107L699.2 1106L690 1106L675.4 1110L649 1078.3L623 1050.7L589 1050.7L543.2 1048L505.8 1016.7L503.3 983.6L456.5 986L405.5 999.7L393.6 996.3L448 975.9L505.8 964.9L520.3 989.5L541.5 1023.5L589 1025L612 984.4Z" fill="#0b0c0e"/>
<path transform="translate(1294.5 462.9) scale(0.0322)" d="M956 990L1007.5 905.6L1045.8 853L1056.7 830L1065.4 813.7L1078.6 783L1077.5 763.4L1101.5 751.4L1160.6 723L1184.6 735L1179 753.6L1162.8 789.7L1143 833.4L1149.6 886L1171.5 918.7L1190 949.3L1173.7 937.3L1157.3 933L1127.8 929.6L1106 966.8L1082 1005.2L1062.9 1057.3L1058.4 1075.8L1092.3 1083.3L1062.9 1087.8L1053.8 1107L1047 1113.8L1031 1107L1024.4 1094.6L1001.8 1081L958.8 1093.5L918.5 1131.5L868 1178L810.7 1225L757.8 1245.5L738 1238L795.6 1223.6L856 1176.7L916.5 1114.8L939.6 1073L952 1005.2Z" fill="#0b0c0e"/>
<path transform="translate(1296.9 509.4) scale(0.0383)" d="M753.5 400L786 319.3L817 275.9L840.4 241.5L865.8 212.5L868 192.6L889.3 192.6L902 183.5L950.9 175.4L968.6 192.6L956.3 218L931 246.9L931 276.8L923.7 294L936.4 323L935.5 344.7L925.5 328.4L903.8 330.2L870.8 406.5L872.3 438.2L866.2 477.5L900.2 478L907 486.6L866.2 492.6L845 482L780 498.7L731 496.5L641 511.2L572 508.8L542.7 497.6L531.3 499L554.2 492.4L608 499.8L706.5 484.2L748.4 461L749.9 413.3Z" fill="#0b0c0e"/>
<path d="M1214 945.500h276" stroke="#111" stroke-width="1.3"/>
<circle cx="1350" cy="956.5" r="4.5" fill="#fff" stroke="#333" stroke-width="1.2"/><path d="M1350 956.500v-4.500a4.5 4.5 0 0 1 4.5 4.500z" fill="#222"/><path d="M1342 955v-5h6" fill="none" stroke="#666"/>
<rect x="1387.5" y="952.5" width="8" height="9" fill="#fff" stroke="#222" stroke-width="1.4"/><path d="M1379 954h6M1383 952l2 2-2 2" stroke="#222" stroke-width="1.2" fill="none"/>
<rect x="1425.5" y="951.5" width="9" height="10" fill="#fff" stroke="#222" stroke-width="1.4"/><rect x="1428" y="956" width="4" height="4" fill="#888"/>
<path d="M1466.5 953.500h8l-1 9h-6z" fill="#e8e8e8" stroke="#777"/><path d="M1465.5 952h10M1468.5 950.500h4" stroke="#777"/>
<path d="M1499 962h1M1502 962h1M1505 962h1M1502 959h1M1505 959h1M1505 956h1" stroke="#888" stroke-width="1.5"/>
</svg>
<div class="t" style="left:1226px;top:949px;font-size:12.5px;color:#222">1 Layer</div>
</body></html>
